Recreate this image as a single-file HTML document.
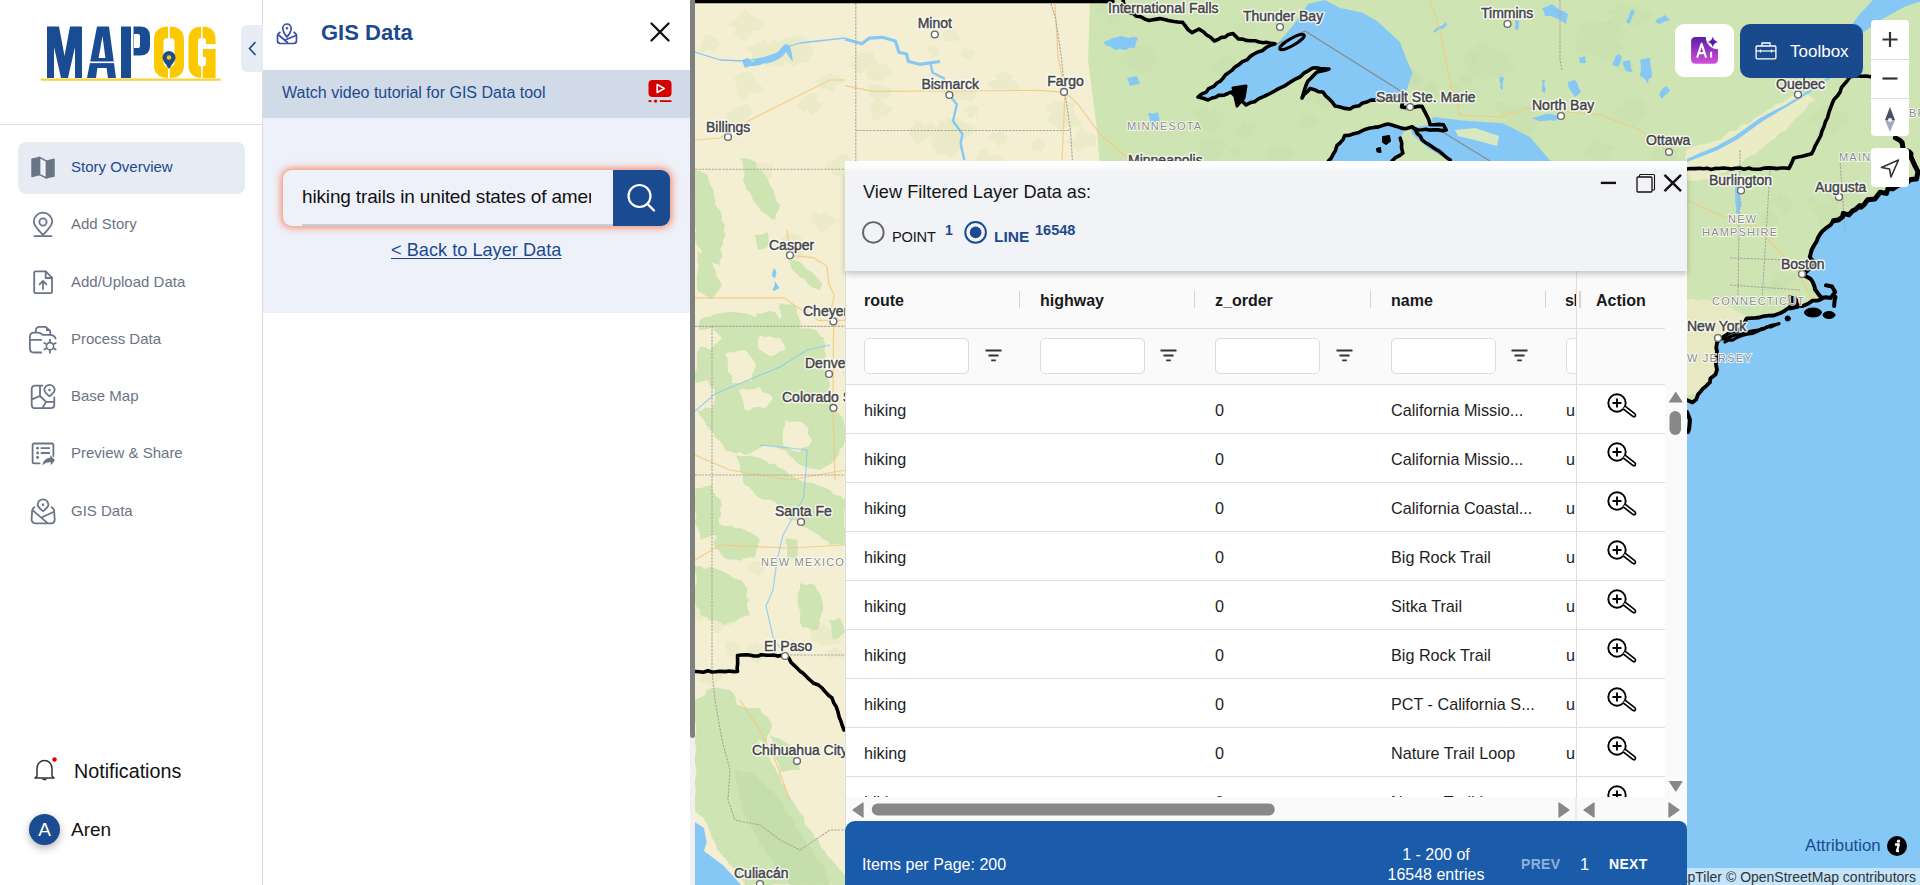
<!DOCTYPE html>
<html><head><meta charset="utf-8">
<style>
*{box-sizing:border-box;margin:0;padding:0}
html,body{width:1920px;height:885px;overflow:hidden;font-family:"Liberation Sans",sans-serif;background:#fff}
.abs{position:absolute}
#sidebar{position:absolute;left:0;top:0;width:263px;height:885px;background:#fff;border-right:1px solid #dcdcdc}
#sidebar .divider{position:absolute;left:0;top:124px;width:262px;height:1px;background:#e0e0e0}
.menu{position:absolute;left:18px;width:227px;height:52px;border-radius:8px}
.menu.active{background:#e6ebf4}
.menu .ic{position:absolute;left:10px;top:13px;width:28px;height:28px}
.menu .tx{position:absolute;left:53px;top:16px;font-size:15px;color:#6b7485;white-space:nowrap}
.menu.active .tx{color:#1c4a8f}
#panel{position:absolute;left:263px;top:0;width:427px;height:885px;background:#fff}
#map{position:absolute;left:695px;top:0;width:1225px;height:885px;background:#f1eecb;overflow:hidden}
#dlg{position:absolute;left:845px;top:161px;width:842px;height:724px}
#dlg .hd{position:absolute;top:131px;font-size:16px;font-weight:bold;color:#1a1a1a}
#dlg .sep{position:absolute;top:130px;width:1.5px;height:17px;background:#d4d4d4}
#dlg .inp{position:absolute;top:177px;width:105px;height:36px;background:#fff;border:1px solid #dcdcdc;border-radius:5px}
#dlg .flt{position:absolute;top:188px}
#dlg .row{position:absolute;left:0;width:819px;height:49px;border-bottom:1px solid #dedede;font-size:16.2px;color:#1e1e1e}
#dlg .row span{position:absolute;top:16px;white-space:nowrap}
#dlg .row .c1{left:18px}#dlg .row .c3{left:369px}#dlg .row .c4{left:545px}#dlg .row .c5{left:720px}
#dlg .zi{position:absolute;left:760px}
</style></head><body>
<div id="sidebar">
  <svg class="abs" style="left:0;top:0" width="262" height="100" viewBox="0 0 262 100">
    <g fill="#1a4c93">
      <polygon points="47,78 47,26.5 59,26.5 64.5,56 70,26.5 82,26.5 82,78 75,78 75,47 68,78 61,78 54,47 54,78"/>
      <path fill-rule="evenodd" d="M87,78 L97,26.5 L109,26.5 L116,78 L108,78 L106.6,68 L97.4,68 L96,78 Z M98.6,58 L102.5,36 L105.4,58 Z"/>
      <path fill-rule="evenodd" d="M121,78 L121,26.5 L140,26.5 Q150,26.5 150,36 L150,46 Q150,55.5 140,55.5 L131,55.5 L131,78 Z M134,34 L134,48 L138,48 Q140,48 140,46 L140,36 Q140,34 138,34 Z"/>
    </g>
    <rect x="88" y="61.5" width="26" height="1.6" fill="#fff"/>
    <rect x="131" y="26" width="2.5" height="30" fill="#fff"/>
    <g fill="#fcc800">
      <path fill-rule="evenodd" d="M154,40 Q154,26.5 169,26.5 Q184,26.5 184,40 L184,65 Q184,78 169,78 Q154,78 154,65 Z M163.5,41 Q163.5,38 169,38 Q174.5,38 174.5,41 L174.5,63 Q174.5,66.5 169,66.5 Q163.5,66.5 163.5,63 Z"/>
      <path d="M188.5,40 Q188.5,26.5 202,26.5 Q215.6,26.5 215.6,40 L215.6,44 L206,44 L206,40 Q206,38 202,38 Q198,38 198,40 L198,64 Q198,66.5 202,66.5 Q206,66.5 206,64 L206,57 L203,57 L203,49 L215.6,49 L215.6,78 L203,78 Q188.5,78 188.5,65 Z"/>
    </g>
    <rect x="168" y="26" width="1.8" height="13" fill="#fff"/>
    <rect x="168" y="66" width="1.8" height="13" fill="#fff"/>
    <rect x="201" y="26" width="1.6" height="12" fill="#fff"/>
    <rect x="201" y="66" width="1.6" height="12" fill="#fff"/>
    <path d="M169,69 C166,64 162.5,60.5 162.5,57.5 A6.5,6.5 0 0 1 175.5,57.5 C175.5,60.5 172,64 169,69 Z" fill="#1a4c93"/>
    <circle cx="169" cy="57.5" r="2.3" fill="#fcc800"/>
    <rect x="40.5" y="78.6" width="180.5" height="2.2" rx="1" fill="#fcd23a"/>
  </svg>
  <div class="abs" style="left:241px;top:25px;width:22px;height:47px;background:#e8edf5;border-radius:6px 0 0 6px"></div>
  <svg class="abs" style="left:241px;top:25px" width="22" height="47"><polyline points="14.5,17 8.5,23.5 14.5,30" fill="none" stroke="#1c4a8f" stroke-width="1.6"/></svg>
  <div class="divider"></div>
<svg class="abs" style="left:0;top:0;z-index:2" width="262" height="540" viewBox="0 0 262 540">
  <g fill="#6b7487" stroke="#6b7487" stroke-width="1.2" stroke-linejoin="round">
   <path d="M31.9,159.1 L39.6,157.3 L39.6,174.7 L31.9,176.7 Z"/>
   <path d="M46.4,161.1 L54.1,159.1 L54.1,176.2 L46.4,178 Z"/>
   <path d="M39.6,157.3 L46.4,161.1 L46.4,178 L39.6,174.7 Z" fill="#eef2f8" stroke-width="1.5"/>
  </g>
  <g fill="none" stroke="#6b7487" stroke-width="1.8" stroke-linecap="round" stroke-linejoin="round">
   <path d="M43,235 C39,230.5 33.8,226 33.8,221.8 A9.2,9.2 0 0 1 52.2,221.8 C52.2,226 47,230.5 43,235 Z"/>
   <circle cx="43" cy="222" r="3.6"/>
   <path d="M34.5,236.2 L51.5,236.2"/>

   <path d="M45.7,271.3 L35.5,271.3 Q34.2,271.3 34.2,272.6 L34.2,292 Q34.2,293.2 35.5,293.2 L50.8,293.2 Q52,293.2 52,292 L52,277.6 Z"/>
   <path d="M45.7,271.3 L45.7,278 L52,278"/>
   <path d="M43,289.1 L43,281.3 M39.6,284.4 L43,280.9 L46.4,284.4"/>

   <path d="M41.2,352.5 L34,352.5 Q29.9,352.5 29.9,348.5 L29.9,337 Q29.9,332.7 34.3,332.7 L38,332.7 Q40,332.7 43,334.9 L51.1,334.9 Q54.5,335.5 55.6,338.5"/>
   <path d="M35.8,332.5 L35.8,330.5 Q36,326.8 39.5,326.8 L45.7,326.8 L50.2,331 L50.2,334.5"/>
   <path d="M30.8,339.9 L41.2,339.9"/>
   <circle cx="50" cy="346.2" r="3.6" stroke-width="1.6"/>
   <path d="M50,339.6 L50,342.2 M50,350.2 L50,352.8 M44.3,342.9 L46.5,344.2 M53.5,348.2 L55.7,349.5 M44.3,349.5 L46.5,348.2 M53.5,344.2 L55.7,342.9" stroke-width="1.8"/>

   <path d="M42.5,385.6 L35.3,385.6 Q31.7,385.6 31.7,389.2 L31.7,404.4 Q31.7,408.2 35.5,408.2 L50.5,408.2 Q54.3,408.2 54.3,404.5 L54.3,397.5"/>
   <path d="M40,386 L40,396 M32.6,399.1 L40,396 L46.1,401.9 L53.8,401.9 M46.1,401.9 L42.5,407.7"/>
   <path d="M49.5,396.4 C47,394 44.3,392 44.3,390 A5.2,5.2 0 0 1 54.7,390 C54.7,392 52,394 49.5,396.4 Z"/>

   <path d="M39.6,463.4 L34.2,463.4 Q32.6,463.4 32.6,461.8 L32.6,445.1 Q32.6,443.5 34.2,443.5 L51.8,443.5 Q53.4,443.5 53.4,445.1 L53.4,456.1"/>
   <path d="M41.5,448.2 L49.3,448.2 M41.5,453 L49.3,453"/>

   <path d="M34.4,507.2 Q32.3,508.5 32.1,511 L31.6,519 Q31.6,523.3 35.5,523.3 L50.8,523.3 Q54.7,523.3 54.7,519.5 L54.1,511 Q54,508.5 51.6,507.2"/>
   <path d="M32.8,510.4 L47,522.6 M52.9,512.2 L42.1,517.2"/>
   <path d="M43,511.1 C40.6,509 37.6,507.2 37.6,504.8 A5.4,5.4 0 0 1 48.4,504.8 C48.4,507.2 45.4,509 43,511.1 Z"/>
  </g>
  <g fill="#6b7487">
   <circle cx="37.6" cy="448.2" r="1.4"/><circle cx="37.6" cy="453" r="1.4"/><circle cx="37.6" cy="457.5" r="1.4"/>
   <path d="M42.2,465.3 Q43.5,458.5 50.5,457.5 L50.2,455 L55,460.3 L50.8,465.3 L50.6,462 Q46,462 42.2,465.3 Z"/>
   <circle cx="49.5" cy="390.1" r="1.3"/><circle cx="43" cy="504.8" r="1.3"/>
   <path d="M46,327.5 L49.5,331 L46,331 Z"/>
  </g>
</svg>

  <div class="menu active" style="top:142px">
    <div class="tx">Story Overview</div>
  </div>
  <div class="menu" style="top:199px">
    <div class="tx">Add Story</div>
  </div>
  <div class="menu" style="top:257px">
    <div class="tx">Add/Upload Data</div>
  </div>
  <div class="menu" style="top:314px">
    <div class="tx">Process Data</div>
  </div>
  <div class="menu" style="top:371px">
    <div class="tx">Base Map</div>
  </div>
  <div class="menu" style="top:428px">
    <div class="tx">Preview &amp; Share</div>
  </div>
  <div class="menu" style="top:486px">
    <div class="tx">GIS Data</div>
  </div>

  <svg class="abs" style="left:33px;top:756px" width="24" height="26" viewBox="0 0 24 26"><path d="M4,20 L4,12 A7.5,7.5 0 0 1 19,12 L19,20 L21,22 L2,22 Z" fill="none" stroke="#333" stroke-width="1.5" stroke-linejoin="round"/><path d="M9.5,22.5 A2.2,2.2 0 0 0 13.5,22.5" fill="none" stroke="#333" stroke-width="1.5"/><circle cx="21.5" cy="3.5" r="2.2" fill="#e00000"/></svg>
  <div class="abs" style="left:74px;top:759.5px;font-size:19.7px;color:#111">Notifications</div>
  <div class="abs" style="left:29px;top:814px;width:31px;height:31px;border-radius:50%;background:#1b4c91;box-shadow:0 3px 8px rgba(0,0,0,.3);color:#fff;font-size:19px;text-align:center;line-height:31px">A</div>
  <div class="abs" style="left:71px;top:819px;font-size:19px;color:#111">Aren</div>
</div>
<div id="panel">
  <svg class="abs" style="left:13px;top:22px" width="22" height="23" viewBox="0 0 22 23"><path d="M4.5,10 Q1.5,11.5 1.5,14 L1.5,18.5 Q1.5,21.5 4.5,21.5 L17.5,21.5 Q20.5,21.5 20.5,18.5 L20.5,14 Q20.5,11.5 17.5,10" fill="none" stroke="#3e4fa6" stroke-width="1.7"/><path d="M2,12.5 L12,21 M20,13.5 L9,18" fill="none" stroke="#3e4fa6" stroke-width="1.7"/><path d="M11,15 C8.5,12 6.8,10 6.8,6.2 A4.2,4.2 0 0 1 15.2,6.2 C15.2,10 13.5,12 11,15 Z" fill="#fff" stroke="#3e4fa6" stroke-width="1.7"/><circle cx="11" cy="6.2" r="1.2" fill="#3e4fa6"/></svg>
  <div class="abs" style="left:58px;top:20px;font-size:22px;font-weight:bold;color:#1c4a8f">GIS Data</div>
  <svg class="abs" style="left:386px;top:21px" width="22" height="22" viewBox="0 0 22 22"><path d="M2.5,2.5 L19.5,19.5 M19.5,2.5 L2.5,19.5" stroke="#111" stroke-width="2.3" stroke-linecap="round"/></svg>
  <div class="abs" style="left:0;top:70px;width:427px;height:48px;background:#d1dbe8"></div>
  <div class="abs" style="left:19px;top:84px;font-size:16px;color:#1c4a8f">Watch video tutorial for GIS Data tool</div>
  <svg class="abs" style="left:385px;top:80px" width="24" height="24" viewBox="0 0 24 24"><rect x="0.5" y="0" width="23" height="17" rx="4" fill="#d40000"/><path d="M9.2,4.5 L16.2,8.5 L9.2,12.5 Z" fill="none" stroke="#fff" stroke-width="1.6" stroke-linejoin="round"/><rect x="0.5" y="20.2" width="3" height="1.8" fill="#d40000"/><circle cx="7.6" cy="21.1" r="1.6" fill="#d40000"/><rect x="11.8" y="20.2" width="11.7" height="1.8" fill="#d40000"/></svg>
  <div class="abs" style="left:0;top:118px;width:427px;height:195px;background:#eef1fa"></div>
  <div class="abs" style="left:20px;top:170px;width:387px;height:56px;border-radius:9px;background:#eef1fa;box-shadow:0 0 7px 2px rgba(250,105,60,.72);overflow:hidden">
    <div class="abs" style="left:19px;top:16px;width:289px;overflow:hidden;white-space:nowrap;font-size:19px;color:#111;letter-spacing:-0.15px">hiking trails in united states of america</div>
    <div class="abs" style="left:19px;bottom:0;width:311px;height:2px;background:#c9ccd6"></div>
    <div class="abs" style="left:330px;top:0;width:57px;height:56px;background:#1a4b91"></div>
    <svg class="abs" style="left:330px;top:0" width="57" height="56" viewBox="0 0 57 56"><circle cx="26.5" cy="26" r="11" fill="none" stroke="#fff" stroke-width="2.2"/><line x1="34.5" y1="34" x2="41" y2="40.5" stroke="#fff" stroke-width="2.4" stroke-linecap="round"/></svg>
  </div>
  <div class="abs" style="left:128px;top:240px;font-size:18.2px;color:#1c4a8f;text-decoration:underline;text-underline-offset:2px">&lt; Back to Layer Data</div>
  <div class="abs" style="left:427px;top:0;width:5px;height:738px;background:#808080;border-radius:0 0 3px 3px"></div>
  <div class="abs" style="left:427px;top:738px;width:5px;height:147px;background:#f0f0f0"></div>
</div>
<div id="map">
<svg id="mapsvg" class="abs" style="left:0;top:0" width="1225" height="885" viewBox="695 0 1225 885">
<rect x="695" y="0" width="1225" height="885" fill="#f4efd2"/>
<path d="M1090.0,0.0 L1920.0,0.0 L1920.0,885.0 L1687.0,885.0 L1687.0,420.0 L1500.0,420.0 L1300.0,170.0 L1100.0,170.0 L1097.0,130.0 L1088.0,60.0 Z" fill="#cfe4b3"/>
<path d="M1687.0,150.0 L1692.9,146.6 L1700.8,144.3 L1706.9,143.5 L1711.6,142.0 L1720.0,140.0 L1723.9,136.2 L1729.7,131.2 L1736.8,130.6 L1741.4,124.6 L1749.1,123.9 L1754.6,118.2 L1760.0,115.0 L1767.6,109.9 L1772.9,107.6 L1775.7,103.6 L1782.1,103.1 L1787.3,98.9 L1794.8,94.8 L1800.0,92.0 L1807.7,94.3 L1815.0,100.0 L1808.2,103.8 L1805.7,109.7 L1799.3,115.3 L1794.8,119.2 L1790.0,125.0 L1786.2,130.0 L1779.0,133.6 L1775.1,139.0 L1770.9,140.8 L1766.9,144.3 L1760.0,150.0 L1754.7,154.4 L1748.6,156.6 L1743.2,160.7 L1741.1,163.6 L1736.5,165.9 L1730.0,170.0 L1724.8,172.4 L1718.3,173.8 L1713.4,177.8 L1705.9,178.7 L1700.0,180.0 L1691.7,180.8 L1687.0,180.0 L1687.6,176.0 L1688.3,167.1 L1686.5,162.7 L1685.1,155.8 Z" fill="#e9ecc4"/>
<path d="M1687.0,300.0 L1692.3,298.5 L1698.4,301.1 L1705.3,299.0 L1713.0,301.5 L1720.0,300.0 L1724.3,303.4 L1732.2,308.7 L1739.3,312.3 L1743.1,314.1 L1750.0,318.0 L1743.8,323.9 L1740.6,325.4 L1731.9,330.1 L1726.5,335.5 L1722.0,340.0 L1721.0,345.1 L1717.2,351.7 L1717.3,358.3 L1718.2,364.8 L1715.0,370.0 L1711.3,375.5 L1708.2,378.2 L1705.3,386.1 L1700.0,390.0 L1695.0,393.7 L1687.0,395.0 L1686.6,388.3 L1685.4,382.9 L1685.2,374.3 L1685.8,368.3 L1686.4,361.5 L1685.0,355.6 L1685.4,350.1 L1685.1,345.8 L1687.5,336.6 L1686.0,331.1 L1686.5,323.8 L1688.4,321.0 L1686.9,312.6 L1685.3,304.7 Z" fill="#e6e9c2"/>
<path d="M976.7,91.8 L976.7,95.6 L971.5,102.5 L966.1,99.4 L959.0,99.4 L949.6,103.0 L953.6,99.4 L940.0,91.8 L946.5,88.1 L956.3,81.9 L959.7,83.1 L964.4,84.8 L971.1,82.7 L979.9,86.3 Z" fill="#e9e9c6" opacity="0.75"/>
<path d="M1016.1,82.5 L1020.4,88.7 L1014.3,91.8 L1006.4,89.9 L1001.8,88.5 L994.4,89.6 L989.3,86.4 L986.4,82.5 L997.8,79.2 L993.4,74.8 L1000.1,73.6 L1005.8,71.5 L1013.8,76.2 L1011.2,78.8 Z" fill="#e9e9c6" opacity="0.75"/>
<path d="M1082.1,122.5 L1080.6,125.4 L1079.9,126.9 L1078.3,126.3 L1075.1,126.0 L1072.2,125.2 L1071.3,124.2 L1071.6,122.5 L1069.3,120.6 L1071.3,119.4 L1075.6,115.7 L1078.6,119.1 L1082.9,119.4 L1081.6,119.6 Z" fill="#e9e9c6" opacity="0.75"/>
<path d="M938.0,50.9 L938.3,53.3 L937.4,54.6 L936.0,55.7 L932.5,57.3 L931.2,53.6 L926.4,53.7 L929.2,50.9 L927.2,47.9 L931.2,45.5 L932.2,45.7 L935.3,47.8 L936.3,45.5 L938.3,48.4 Z" fill="#e9e9c6" opacity="0.75"/>
<path d="M927.5,132.7 L930.6,135.2 L923.4,140.5 L921.3,142.9 L915.7,145.3 L912.4,136.9 L909.3,136.6 L910.6,132.7 L908.4,128.3 L912.9,126.2 L914.3,119.5 L920.8,121.9 L925.8,127.6 L924.1,130.3 Z" fill="#e9e9c6" opacity="0.75"/>
<path d="M1073.9,113.7 L1078.8,120.3 L1073.1,127.9 L1067.0,126.5 L1060.5,130.4 L1052.9,125.3 L1046.9,121.2 L1051.1,113.7 L1045.5,106.4 L1055.7,101.2 L1060.1,100.5 L1068.7,102.6 L1075.4,102.8 L1073.7,107.5 Z" fill="#e9e9c6" opacity="0.75"/>
<path d="M1095.4,141.4 L1096.3,145.7 L1094.3,146.6 L1087.1,147.4 L1080.3,151.5 L1077.2,151.1 L1071.6,146.4 L1065.3,141.4 L1076.7,137.6 L1073.9,135.3 L1081.4,127.3 L1086.9,131.6 L1094.6,134.3 L1097.2,138.0 Z" fill="#e9e9c6" opacity="0.75"/>
<path d="M977.4,129.9 L971.7,134.4 L963.4,139.5 L961.4,145.5 L952.9,146.6 L949.3,136.7 L943.8,134.2 L945.6,129.9 L941.7,124.7 L949.0,117.5 L952.1,118.5 L959.1,123.0 L969.6,124.3 L973.3,124.3 Z" fill="#e9e9c6" opacity="0.75"/>
<path d="M933.3,127.7 L932.4,130.2 L932.2,130.1 L930.3,132.6 L928.3,132.6 L925.6,132.1 L922.4,129.9 L925.4,127.7 L925.9,126.6 L926.1,123.5 L928.6,124.2 L930.6,122.5 L933.1,123.8 L935.7,125.9 Z" fill="#e9e9c6" opacity="0.75"/>
<path d="M1047.0,145.5 L1042.0,147.6 L1042.6,150.9 L1039.4,150.7 L1036.3,151.7 L1032.7,149.3 L1031.7,147.1 L1030.6,145.5 L1031.8,142.8 L1035.2,140.1 L1036.2,138.4 L1039.6,139.2 L1041.5,140.1 L1045.7,143.6 Z" fill="#e9e9c6" opacity="0.75"/>
<path d="M892.7,73.3 L884.6,78.4 L883.0,82.3 L880.4,80.9 L875.5,79.4 L873.8,80.5 L866.4,78.5 L865.4,73.3 L868.5,67.8 L874.2,68.0 L876.0,66.1 L881.7,63.4 L885.8,64.1 L889.4,70.1 Z" fill="#e9e9c6" opacity="0.75"/>
<path d="M957.0,136.0 L965.1,141.4 L955.8,143.0 L949.2,147.8 L942.1,142.9 L932.4,145.6 L933.4,142.7 L929.8,136.0 L929.8,132.8 L936.0,127.3 L941.0,119.8 L948.4,124.5 L952.1,127.1 L963.2,128.9 Z" fill="#e9e9c6" opacity="0.75"/>
<path d="M975.5,54.2 L971.7,57.4 L969.9,57.6 L968.5,61.0 L965.8,59.2 L962.1,57.2 L959.1,55.9 L959.7,54.2 L962.3,51.5 L962.8,50.0 L965.7,48.2 L968.4,49.9 L972.4,48.9 L974.1,50.8 Z" fill="#e9e9c6" opacity="0.75"/>
<path d="M1007.2,137.8 L1007.3,140.1 L1001.8,144.6 L999.0,146.7 L995.3,142.0 L993.8,143.7 L992.0,139.6 L987.4,137.8 L988.7,136.0 L993.1,132.0 L996.6,133.3 L999.7,129.4 L1004.6,134.5 L1004.8,134.4 Z" fill="#e9e9c6" opacity="0.75"/>
<path d="M977.7,111.3 L977.1,114.0 L977.8,116.2 L974.3,115.5 L971.9,118.8 L966.5,117.7 L968.8,112.9 L962.7,111.3 L964.8,109.1 L968.6,106.6 L971.6,105.0 L974.1,104.4 L979.2,107.9 L979.6,108.1 Z" fill="#e9e9c6" opacity="0.75"/>
<path d="M958.5,35.2 L959.9,38.4 L956.5,41.2 L953.0,40.4 L949.5,40.9 L944.8,41.0 L946.1,38.6 L942.4,35.2 L942.9,33.0 L945.1,29.2 L949.3,28.3 L953.2,30.1 L956.6,32.5 L956.8,32.8 Z" fill="#e9e9c6" opacity="0.75"/>
<path d="M876.0,60.1 L877.8,65.0 L868.9,68.9 L865.3,70.0 L859.9,74.0 L853.7,69.2 L848.7,66.2 L855.3,60.1 L849.0,56.8 L855.4,55.5 L860.4,51.6 L864.1,52.7 L872.8,52.1 L873.5,54.1 Z" fill="#e9e9c6" opacity="0.75"/>
<path d="M1003.5,159.2 L999.8,164.5 L992.4,169.9 L989.7,168.6 L985.9,168.8 L979.4,163.9 L972.3,163.2 L975.2,159.2 L978.0,155.8 L979.1,151.1 L985.6,147.8 L990.0,153.8 L993.7,154.7 L995.5,154.0 Z" fill="#e9e9c6" opacity="0.75"/>
<path d="M955.8,144.1 L964.7,147.0 L959.2,152.0 L950.7,159.1 L945.4,154.9 L936.1,154.2 L935.9,150.8 L930.5,144.1 L939.7,138.9 L939.7,137.9 L945.9,133.3 L949.7,134.1 L957.4,136.0 L957.3,139.1 Z" fill="#e9e9c6" opacity="0.75"/>
<path d="M970.5,125.6 L966.5,128.6 L959.0,135.0 L957.5,135.2 L952.2,132.5 L946.3,132.9 L943.5,129.9 L940.8,125.6 L946.6,120.1 L944.9,116.3 L952.9,120.3 L956.4,117.5 L962.1,121.1 L964.8,123.2 Z" fill="#e9e9c6" opacity="0.75"/>
<path d="M892.1,109.8 L889.5,112.7 L885.5,118.5 L882.7,115.3 L877.8,121.1 L871.6,118.6 L871.8,113.5 L870.5,109.8 L870.4,105.3 L869.3,103.8 L876.8,99.0 L882.9,101.5 L885.7,105.3 L893.1,107.4 Z" fill="#e9e9c6" opacity="0.75"/>
<path d="M891.1,92.5 L890.6,94.8 L883.6,100.1 L880.2,99.3 L875.8,102.2 L873.3,97.0 L870.3,96.9 L869.3,92.5 L867.3,88.5 L869.6,83.2 L875.4,84.6 L881.7,85.6 L884.2,86.4 L892.0,87.5 Z" fill="#e9e9c6" opacity="0.75"/>
<path d="M744.2,118.9 L743.6,121.3 L742.2,126.3 L738.2,128.4 L733.8,124.1 L728.8,126.8 L729.2,120.8 L726.5,118.9 L727.1,114.3 L729.4,111.5 L734.7,111.3 L738.6,114.3 L739.7,111.9 L747.4,116.9 Z" fill="#e9e9c6" opacity="0.75"/>
<path d="M807.2,50.3 L801.1,56.1 L800.5,60.7 L794.7,59.3 L787.7,62.4 L783.6,59.0 L777.4,55.9 L773.5,50.3 L776.3,45.0 L780.9,39.6 L788.1,36.2 L796.2,38.5 L800.5,40.3 L807.3,46.0 Z" fill="#e9e9c6" opacity="0.75"/>
<path d="M780.2,51.0 L769.5,54.5 L768.8,57.9 L765.2,57.4 L758.5,57.9 L751.5,61.5 L752.3,53.9 L748.1,51.0 L744.5,48.3 L755.5,45.0 L758.7,43.1 L764.5,39.7 L767.3,45.0 L770.7,47.8 Z" fill="#e9e9c6" opacity="0.75"/>
<path d="M824.4,103.2 L817.9,108.5 L819.5,109.3 L812.5,115.6 L807.4,109.8 L805.6,113.1 L796.9,106.7 L798.2,103.2 L801.7,97.6 L801.8,97.8 L808.4,94.6 L812.1,92.0 L818.2,95.4 L816.9,100.5 Z" fill="#e9e9c6" opacity="0.75"/>
<path d="M761.7,86.7 L765.8,90.8 L756.2,93.1 L750.7,93.1 L742.4,101.8 L734.8,92.5 L736.1,92.8 L737.2,86.7 L733.7,79.5 L736.7,74.5 L743.9,72.2 L749.7,70.9 L752.5,74.8 L756.5,81.4 Z" fill="#e9e9c6" opacity="0.75"/>
<path d="M788.2,54.6 L784.3,58.8 L784.9,65.3 L779.0,67.7 L774.1,64.8 L767.6,67.4 L759.5,60.3 L768.1,54.6 L760.8,50.8 L766.7,46.0 L774.4,38.5 L780.3,46.3 L786.1,47.3 L787.8,49.5 Z" fill="#e9e9c6" opacity="0.75"/>
<path d="M754.3,111.3 L749.6,115.3 L748.3,119.7 L745.5,120.3 L741.4,121.0 L739.4,115.4 L737.7,115.2 L731.8,111.3 L735.3,106.9 L736.7,107.4 L741.6,106.1 L744.7,104.4 L747.0,103.0 L751.4,107.9 Z" fill="#e9e9c6" opacity="0.75"/>
<path d="M806.7,246.6 L805.7,249.4 L802.0,257.1 L798.4,260.6 L790.2,258.8 L788.8,254.1 L782.8,252.2 L784.6,246.6 L780.9,240.3 L782.4,236.8 L791.6,232.8 L798.2,235.0 L801.6,237.6 L802.6,240.7 Z" fill="#e9e9c6" opacity="0.75"/>
<path d="M860.1,167.6 L859.6,172.6 L849.1,172.7 L845.3,178.5 L839.7,176.2 L831.8,174.7 L831.6,170.6 L824.4,167.6 L827.0,162.8 L834.5,158.9 L840.8,153.6 L847.3,154.4 L852.0,162.1 L858.3,163.9 Z" fill="#e9e9c6" opacity="0.75"/>
<path d="M845.1,80.9 L841.0,83.4 L834.3,86.1 L833.8,93.4 L827.1,88.4 L821.7,89.7 L820.7,85.2 L815.3,80.9 L822.4,77.0 L825.1,74.4 L827.3,74.5 L832.7,73.7 L837.7,74.7 L841.8,78.5 Z" fill="#e9e9c6" opacity="0.75"/>
<path d="M814.5,50.6 L810.4,56.7 L808.8,62.7 L801.6,62.7 L792.2,66.6 L784.4,59.7 L783.9,56.4 L775.9,50.6 L782.8,45.5 L783.9,42.3 L795.2,35.8 L802.0,35.8 L808.0,38.5 L809.0,44.7 Z" fill="#e9e9c6" opacity="0.75"/>
<path d="M720.4,44.2 L715.7,48.4 L716.6,49.1 L712.0,51.4 L708.4,49.1 L701.4,53.2 L699.5,48.9 L700.6,44.2 L703.2,39.9 L703.4,35.5 L708.7,34.2 L711.6,36.0 L719.1,40.6 L717.2,41.3 Z" fill="#e9e9c6" opacity="0.75"/>
<path d="M766.4,24.7 L758.9,30.4 L752.7,30.2 L751.6,34.5 L743.7,41.0 L733.7,33.9 L737.1,29.0 L726.4,24.7 L737.2,17.9 L738.9,15.5 L744.7,9.0 L751.9,16.1 L757.6,17.9 L765.3,21.6 Z" fill="#e9e9c6" opacity="0.75"/>
<path d="M727.3,233.6 L724.8,235.7 L721.8,241.2 L717.2,237.9 L713.9,239.3 L708.9,237.6 L709.7,236.0 L705.3,233.6 L708.4,230.1 L708.0,227.7 L713.9,228.0 L718.1,225.8 L719.8,227.4 L720.4,229.3 Z" fill="#e9e9c6" opacity="0.75"/>
<path d="M770.5,171.4 L772.0,174.4 L772.7,175.8 L765.9,182.1 L761.9,178.4 L756.6,176.4 L750.3,177.0 L757.3,171.4 L751.6,167.9 L754.3,164.5 L762.1,162.3 L766.6,163.8 L771.8,162.7 L774.0,167.5 Z" fill="#e9e9c6" opacity="0.75"/>
<path d="M838.0,220.5 L835.0,223.2 L830.1,225.8 L824.9,231.2 L819.5,231.4 L817.3,227.4 L815.1,224.6 L811.6,220.5 L811.8,216.0 L815.3,211.4 L820.8,214.6 L824.0,212.0 L829.1,214.0 L830.4,215.7 Z" fill="#e9e9c6" opacity="0.75"/>
<path d="M722.5,677.9 L718.5,680.7 L716.5,682.2 L712.7,687.9 L707.9,685.1 L702.8,682.5 L697.2,680.8 L701.5,677.9 L698.4,672.8 L701.5,673.5 L708.2,670.0 L712.4,665.2 L714.8,670.8 L723.3,672.2 Z" fill="#e9e9c6" opacity="0.75"/>
<path d="M728.9,619.2 L737.3,622.4 L728.5,626.1 L723.8,625.7 L719.2,634.3 L710.6,629.4 L711.8,622.8 L706.9,619.2 L709.3,612.7 L713.6,612.0 L716.7,607.7 L722.7,609.6 L730.5,614.1 L731.4,613.7 Z" fill="#e9e9c6" opacity="0.75"/>
<path d="M839.8,636.8 L842.9,641.4 L837.0,643.8 L828.2,645.2 L821.9,645.0 L818.5,643.8 L812.2,641.1 L811.1,636.8 L809.7,629.9 L818.5,628.4 L823.3,623.1 L828.3,627.4 L830.7,630.1 L836.0,632.1 Z" fill="#e9e9c6" opacity="0.75"/>
<path d="M841.2,653.0 L844.3,655.5 L840.3,659.2 L836.4,656.7 L832.4,658.8 L830.7,659.9 L827.6,656.5 L825.5,653.0 L827.1,650.8 L830.9,649.4 L831.9,649.2 L835.5,646.9 L839.3,649.5 L842.8,650.7 Z" fill="#e9e9c6" opacity="0.75"/>
<path d="M810.4,646.6 L812.7,648.8 L809.1,652.4 L806.4,651.0 L803.9,650.7 L802.6,649.1 L798.2,649.2 L796.3,646.6 L800.0,643.8 L799.2,643.3 L803.4,640.3 L807.4,639.4 L808.5,641.7 L809.2,644.3 Z" fill="#e9e9c6" opacity="0.75"/>
<path d="M765.0,567.8 L763.8,570.1 L762.3,573.6 L758.4,576.3 L755.3,572.6 L751.8,573.4 L751.0,571.4 L745.7,567.8 L746.8,565.9 L751.5,562.6 L755.6,561.0 L758.2,560.4 L763.3,562.0 L764.2,565.2 Z" fill="#e9e9c6" opacity="0.75"/>
<path d="M719.3,605.1 L719.0,608.9 L712.5,615.5 L708.1,615.4 L699.8,621.5 L691.8,615.6 L688.4,609.9 L689.5,605.1 L685.9,598.1 L695.0,592.3 L701.4,597.2 L706.8,595.4 L711.6,591.7 L712.7,601.3 Z" fill="#e9e9c6" opacity="0.75"/>
<path d="M737.5,648.4 L739.6,650.5 L738.1,654.0 L735.0,655.3 L731.3,656.4 L726.1,652.7 L727.0,652.1 L726.5,648.4 L724.7,645.2 L726.1,642.0 L731.9,641.6 L734.9,641.9 L737.5,644.4 L741.9,645.6 Z" fill="#e9e9c6" opacity="0.75"/>
<path d="M740.7,592.4 L739.7,594.3 L737.8,596.0 L736.7,597.0 L732.5,601.0 L728.9,596.3 L723.7,596.5 L729.0,592.4 L726.3,588.5 L729.3,585.8 L732.8,584.1 L736.0,586.5 L741.2,585.1 L744.7,589.1 Z" fill="#e9e9c6" opacity="0.75"/>
<path d="M776.7,651.9 L768.3,655.6 L769.7,657.7 L762.9,657.3 L758.1,665.1 L750.3,657.0 L748.2,655.8 L747.4,651.9 L745.8,645.9 L756.5,642.9 L759.2,646.3 L763.2,640.5 L771.9,646.9 L770.3,649.5 Z" fill="#e9e9c6" opacity="0.75"/>
<path d="M1422.5,79.9 L1425.7,82.5 L1420.0,86.4 L1417.3,90.4 L1412.8,88.5 L1408.6,87.3 L1408.9,82.2 L1408.5,79.9 L1408.1,76.6 L1410.8,74.9 L1413.5,72.1 L1416.1,71.7 L1419.4,75.4 L1423.1,77.0 Z" fill="#c5ddab" opacity="0.45"/>
<path d="M1258.8,12.9 L1254.0,14.5 L1254.3,18.4 L1251.6,19.2 L1249.2,17.3 L1245.7,16.4 L1247.2,15.2 L1243.6,12.9 L1246.2,10.0 L1245.5,7.5 L1249.3,6.8 L1252.2,9.6 L1252.8,10.3 L1254.2,11.6 Z" fill="#c5ddab" opacity="0.45"/>
<path d="M1317.0,121.8 L1314.0,126.1 L1311.3,127.4 L1310.7,130.4 L1305.8,128.0 L1301.3,128.9 L1298.4,126.2 L1302.5,121.8 L1301.0,118.2 L1303.9,114.3 L1307.1,114.5 L1309.7,115.7 L1313.0,115.6 L1318.2,119.1 Z" fill="#c5ddab" opacity="0.45"/>
<path d="M1481.5,59.9 L1474.9,62.4 L1476.4,63.8 L1472.3,66.7 L1467.9,64.6 L1466.6,63.5 L1463.5,62.6 L1465.3,59.9 L1463.1,57.4 L1464.6,52.5 L1468.7,51.1 L1471.6,51.8 L1473.5,52.3 L1477.2,55.8 Z" fill="#c5ddab" opacity="0.45"/>
<path d="M1236.7,68.3 L1241.0,74.6 L1234.2,74.1 L1229.9,82.9 L1225.4,79.6 L1220.1,77.5 L1218.7,73.3 L1209.9,68.3 L1214.3,63.7 L1218.8,62.9 L1223.6,56.4 L1230.2,56.6 L1234.9,61.0 L1236.3,63.3 Z" fill="#c5ddab" opacity="0.45"/>
<path d="M1438.6,84.9 L1437.8,87.0 L1437.2,87.3 L1433.4,91.3 L1430.7,88.6 L1427.9,90.0 L1427.5,87.5 L1428.4,84.9 L1427.1,83.3 L1427.5,80.8 L1430.4,79.1 L1433.8,80.3 L1437.4,82.7 L1439.1,82.5 Z" fill="#c5ddab" opacity="0.45"/>
<path d="M1256.0,130.1 L1252.2,133.0 L1252.7,134.1 L1247.8,140.2 L1243.1,136.3 L1237.3,138.6 L1233.9,133.8 L1231.4,130.1 L1239.0,127.0 L1241.3,126.3 L1243.4,119.5 L1248.4,124.8 L1250.0,124.3 L1257.6,126.2 Z" fill="#c5ddab" opacity="0.45"/>
<path d="M1634.9,16.1 L1642.4,22.8 L1630.4,27.7 L1626.4,23.3 L1620.0,26.6 L1611.9,24.2 L1607.2,22.7 L1611.5,16.1 L1606.1,10.7 L1616.3,9.5 L1618.1,2.4 L1626.2,7.0 L1637.5,4.4 L1640.6,11.3 Z" fill="#c5ddab" opacity="0.45"/>
<path d="M1287.7,68.3 L1288.0,70.5 L1284.1,72.7 L1282.1,73.0 L1278.1,72.4 L1275.3,71.8 L1271.6,70.2 L1270.8,68.3 L1273.9,64.9 L1276.0,63.0 L1278.3,63.1 L1280.9,63.2 L1283.5,64.1 L1288.8,66.3 Z" fill="#c5ddab" opacity="0.45"/>
<path d="M1510.5,109.2 L1512.8,111.3 L1507.7,113.5 L1505.3,117.4 L1501.1,115.7 L1499.8,116.0 L1498.5,111.6 L1495.9,109.2 L1494.7,106.8 L1496.3,102.1 L1502.0,102.2 L1504.8,103.7 L1507.9,105.0 L1511.4,106.1 Z" fill="#c5ddab" opacity="0.45"/>
<path d="M1677.5,156.4 L1679.3,162.9 L1677.3,162.5 L1666.3,167.8 L1658.8,165.8 L1648.4,163.8 L1650.0,160.2 L1648.2,156.4 L1653.7,152.4 L1651.5,145.2 L1658.5,146.5 L1667.4,141.2 L1675.4,149.7 L1677.0,153.2 Z" fill="#c5ddab" opacity="0.45"/>
<path d="M1607.3,151.4 L1612.6,156.8 L1604.8,163.3 L1601.4,163.2 L1596.4,163.9 L1592.3,157.4 L1584.9,155.7 L1579.8,151.4 L1586.1,148.2 L1591.6,142.4 L1595.1,140.1 L1603.0,143.8 L1610.9,144.9 L1617.9,146.1 Z" fill="#c5ddab" opacity="0.45"/>
<path d="M1356.5,99.9 L1343.2,103.4 L1347.5,111.0 L1339.6,107.9 L1332.4,106.6 L1329.7,107.5 L1317.0,105.7 L1316.5,99.9 L1323.5,96.7 L1328.5,93.9 L1331.2,90.2 L1339.0,86.8 L1348.1,87.0 L1349.8,94.8 Z" fill="#c5ddab" opacity="0.45"/>
<path d="M1634.7,66.1 L1631.1,68.9 L1629.5,70.9 L1626.0,72.6 L1623.1,74.9 L1621.0,71.7 L1616.1,68.9 L1617.7,66.1 L1617.3,63.6 L1618.9,62.0 L1621.9,59.5 L1625.3,60.0 L1631.9,63.1 L1632.7,61.9 Z" fill="#c5ddab" opacity="0.45"/>
<path d="M1319.8,97.7 L1321.2,100.4 L1317.9,103.7 L1314.6,102.1 L1310.7,103.4 L1307.4,105.1 L1304.2,102.0 L1303.5,97.7 L1302.3,95.6 L1303.7,90.1 L1310.3,91.6 L1314.8,88.5 L1318.7,94.1 L1322.5,95.8 Z" fill="#c5ddab" opacity="0.45"/>
<path d="M1479.6,90.6 L1481.6,97.1 L1472.6,96.0 L1466.5,101.7 L1458.3,107.8 L1449.2,96.6 L1445.0,95.6 L1443.5,90.6 L1449.1,85.5 L1456.0,82.5 L1458.2,83.1 L1464.6,75.0 L1473.4,80.5 L1471.4,87.0 Z" fill="#c5ddab" opacity="0.45"/>
<path d="M1295.6,152.8 L1289.4,157.0 L1289.1,157.6 L1283.2,161.6 L1278.3,161.2 L1273.5,161.1 L1265.6,156.8 L1266.5,152.8 L1267.0,150.3 L1271.2,147.8 L1277.1,146.3 L1282.0,146.6 L1286.0,145.1 L1290.3,149.3 Z" fill="#c5ddab" opacity="0.45"/>
<path d="M1443.0,135.6 L1445.0,138.3 L1439.9,140.0 L1434.7,144.3 L1430.9,141.2 L1429.5,143.0 L1425.6,139.4 L1424.4,135.6 L1424.3,131.0 L1425.2,130.0 L1431.0,130.1 L1435.6,130.9 L1437.9,128.0 L1438.0,131.8 Z" fill="#c5ddab" opacity="0.45"/>
<path d="M1435.7,90.5 L1439.5,94.5 L1433.1,97.5 L1431.0,95.6 L1427.4,98.2 L1425.8,97.4 L1420.8,94.7 L1417.1,90.5 L1422.4,86.1 L1422.8,85.9 L1426.8,82.1 L1431.1,85.0 L1432.7,84.7 L1435.8,87.9 Z" fill="#c5ddab" opacity="0.45"/>
<path d="M1255.1,25.4 L1254.4,29.1 L1255.5,30.0 L1249.8,36.3 L1244.1,34.0 L1238.7,32.2 L1235.7,30.5 L1233.4,25.4 L1240.9,20.3 L1240.8,17.0 L1244.9,17.4 L1248.8,15.4 L1255.9,18.7 L1256.8,22.2 Z" fill="#c5ddab" opacity="0.45"/>
<path d="M1243.8,152.2 L1238.3,155.3 L1237.3,156.6 L1235.6,159.6 L1233.5,159.1 L1232.2,157.0 L1231.0,153.6 L1227.7,152.2 L1227.8,149.2 L1229.5,148.0 L1233.8,147.0 L1235.7,147.0 L1238.2,148.1 L1239.0,149.5 Z" fill="#c5ddab" opacity="0.45"/>
<path d="M1348.2,80.3 L1350.0,82.6 L1344.7,83.5 L1343.2,86.1 L1340.1,87.3 L1336.6,85.7 L1334.6,83.3 L1338.4,80.3 L1335.9,77.8 L1337.7,76.0 L1340.1,77.2 L1343.4,73.4 L1344.3,77.8 L1349.5,77.3 Z" fill="#c5ddab" opacity="0.45"/>
<path d="M1130.7,10.0 L1127.8,16.1 L1125.4,14.9 L1115.9,24.1 L1109.4,24.5 L1105.7,17.6 L1102.8,12.8 L1096.1,10.0 L1100.0,4.9 L1106.3,-0.4 L1110.9,1.4 L1118.2,2.0 L1120.1,2.9 L1126.7,3.7 Z" fill="#c5ddab" opacity="0.45"/>
<path d="M1302.9,41.9 L1301.9,47.7 L1298.7,47.9 L1295.4,50.2 L1289.7,53.2 L1283.3,50.0 L1286.0,47.3 L1283.4,41.9 L1282.7,35.7 L1286.2,35.1 L1289.3,28.0 L1295.6,35.4 L1302.8,32.2 L1302.7,36.5 Z" fill="#c5ddab" opacity="0.45"/>
<path d="M1334.4,49.5 L1333.7,51.8 L1327.4,56.1 L1321.7,62.1 L1318.3,56.3 L1310.3,59.9 L1305.4,53.0 L1303.8,49.5 L1307.4,43.8 L1314.7,44.5 L1317.1,37.2 L1323.3,36.6 L1327.2,42.9 L1327.1,46.2 Z" fill="#c5ddab" opacity="0.45"/>
<path d="M1650.9,16.1 L1650.1,17.9 L1647.6,20.8 L1646.3,22.2 L1642.5,22.0 L1638.1,19.0 L1639.5,17.7 L1638.4,16.1 L1635.4,13.5 L1641.3,12.2 L1642.8,11.4 L1646.6,7.9 L1649.0,11.1 L1653.3,13.6 Z" fill="#c5ddab" opacity="0.45"/>
<path d="M1219.9,151.3 L1223.8,154.7 L1217.6,158.4 L1215.0,160.6 L1208.6,160.7 L1198.1,161.3 L1194.3,156.7 L1199.2,151.3 L1198.8,148.0 L1202.8,140.3 L1207.5,139.2 L1214.6,140.9 L1219.3,137.9 L1226.1,146.2 Z" fill="#c5ddab" opacity="0.45"/>
<path d="M1425.6,76.4 L1424.5,80.5 L1420.8,80.3 L1415.3,86.4 L1411.6,81.3 L1406.6,80.7 L1404.6,78.5 L1400.7,76.4 L1408.1,72.7 L1408.4,70.4 L1411.3,66.7 L1415.3,70.1 L1416.4,70.7 L1419.7,73.0 Z" fill="#c5ddab" opacity="0.45"/>
<path d="M1472.9,76.6 L1473.0,79.8 L1469.7,80.4 L1467.4,82.9 L1465.4,83.1 L1461.5,79.8 L1458.7,78.9 L1460.5,76.6 L1458.5,74.5 L1462.6,73.4 L1464.6,71.7 L1467.7,73.0 L1469.5,71.5 L1473.8,73.5 Z" fill="#c5ddab" opacity="0.45"/>
<path d="M1648.6,111.2 L1647.9,114.7 L1643.1,118.4 L1634.3,126.2 L1630.1,122.2 L1624.4,122.2 L1618.1,117.8 L1612.5,111.2 L1624.2,105.6 L1626.2,98.7 L1627.8,102.1 L1634.2,98.4 L1642.7,98.7 L1645.9,107.9 Z" fill="#c5ddab" opacity="0.45"/>
<path d="M1860.9,196.4 L1860.3,201.9 L1855.4,206.8 L1845.9,206.8 L1839.8,203.1 L1836.2,208.1 L1832.5,202.3 L1824.2,196.4 L1829.1,192.2 L1835.3,189.8 L1838.9,183.0 L1847.2,186.7 L1855.3,183.8 L1853.4,189.3 Z" fill="#c5ddab" opacity="0.45"/>
<path d="M1831.8,295.9 L1832.7,300.6 L1825.1,307.3 L1823.2,306.4 L1816.3,304.2 L1813.8,305.1 L1810.5,299.9 L1811.6,295.9 L1809.3,291.0 L1808.1,286.2 L1817.2,286.0 L1822.4,285.4 L1832.1,290.2 L1831.7,290.3 Z" fill="#c5ddab" opacity="0.45"/>
<path d="M1867.2,251.1 L1858.8,255.5 L1861.2,259.0 L1852.1,262.9 L1848.4,257.7 L1842.1,257.2 L1836.8,256.2 L1839.8,251.1 L1837.5,246.0 L1842.7,243.8 L1848.3,241.7 L1854.0,238.1 L1854.8,246.3 L1858.9,246.0 Z" fill="#c5ddab" opacity="0.45"/>
<path d="M1792.5,204.1 L1790.1,208.0 L1789.1,211.0 L1783.2,213.3 L1780.4,208.8 L1775.8,207.6 L1776.3,207.2 L1772.2,204.1 L1769.3,199.5 L1775.7,197.3 L1780.0,192.9 L1783.4,197.6 L1786.6,195.8 L1791.0,200.9 Z" fill="#c5ddab" opacity="0.45"/>
<path d="M1784.0,287.6 L1780.8,290.1 L1778.6,292.5 L1775.3,294.7 L1772.1,292.8 L1767.4,292.5 L1766.6,291.4 L1765.9,287.6 L1763.8,283.5 L1767.4,282.9 L1771.7,279.8 L1775.2,279.9 L1780.9,281.8 L1782.2,284.9 Z" fill="#c5ddab" opacity="0.45"/>
<path d="M1841.4,214.9 L1837.8,220.5 L1832.1,222.8 L1831.0,223.3 L1823.9,222.9 L1819.4,227.2 L1818.2,221.4 L1818.9,214.9 L1811.3,208.7 L1819.5,205.6 L1823.6,201.7 L1830.9,203.4 L1833.9,204.7 L1840.3,209.9 Z" fill="#c5ddab" opacity="0.45"/>
<path d="M1909.0,205.0 L1914.7,208.9 L1906.4,213.9 L1900.4,212.6 L1893.9,219.6 L1887.4,212.0 L1881.4,209.5 L1887.8,205.0 L1885.3,200.1 L1884.9,195.8 L1893.0,195.6 L1901.1,198.3 L1904.4,194.9 L1911.9,198.8 Z" fill="#c5ddab" opacity="0.45"/>
<path d="M1779.4,220.1 L1777.3,223.8 L1773.8,224.9 L1772.6,230.1 L1768.2,225.3 L1766.0,223.8 L1759.3,224.0 L1762.5,220.1 L1760.0,218.2 L1762.4,212.4 L1768.3,211.6 L1772.3,213.9 L1777.6,215.8 L1778.0,217.4 Z" fill="#c5ddab" opacity="0.45"/>
<path d="M1795.5,279.4 L1790.6,282.4 L1790.8,284.3 L1786.4,287.1 L1780.4,287.8 L1773.5,289.2 L1770.7,282.2 L1772.7,279.4 L1775.0,274.0 L1773.2,273.9 L1780.5,272.5 L1785.9,274.0 L1791.2,274.9 L1796.4,275.2 Z" fill="#c5ddab" opacity="0.45"/>
<path d="M1817.6,200.5 L1818.2,203.2 L1814.7,202.8 L1813.2,205.9 L1811.5,204.1 L1808.3,204.8 L1808.0,202.5 L1807.7,200.5 L1807.8,198.7 L1809.6,197.5 L1811.4,197.9 L1813.6,195.5 L1815.4,198.1 L1819.4,198.5 Z" fill="#c5ddab" opacity="0.45"/>
<path d="M740.0,158.0 L745.4,158.2 L752.0,160.0 L756.4,162.8 L756.7,169.6 L761.7,170.7 L765.0,174.3 L768.0,180.0 L770.5,186.7 L774.1,190.7 L774.3,194.5 L776.4,201.0 L780.0,205.0 L778.5,211.0 L776.1,214.0 L775.0,220.0 L771.1,218.4 L766.3,214.4 L760.0,210.0 L758.1,205.9 L753.0,200.1 L750.5,193.3 L746.3,189.2 L745.0,185.0 L743.1,180.3 L744.6,174.0 L743.6,170.6 L742.6,162.9 Z" fill="#cfe4b3"/>
<path d="M695.0,170.0 L700.5,171.5 L708.0,175.0 L708.3,178.9 L711.2,186.4 L713.4,189.9 L714.2,196.1 L715.0,200.0 L715.5,205.6 L720.5,211.0 L721.9,214.9 L721.8,221.0 L725.0,225.0 L723.8,231.1 L725.4,234.6 L722.8,241.6 L723.3,243.8 L720.5,248.7 L722.7,256.1 L719.4,261.2 L720.0,265.0 L716.7,263.9 L709.5,261.8 L705.0,260.0 L701.2,253.3 L701.7,250.5 L697.6,246.6 L695.0,240.0 L694.8,236.3 L696.2,229.0 L694.1,224.3 L694.1,220.3 L694.1,214.7 L693.7,211.5 L694.5,204.8 L695.3,201.5 L694.7,196.5 L695.0,190.1 L695.1,183.3 L694.8,178.9 L693.2,176.1 Z" fill="#cfe4b3"/>
<path d="M697.0,250.0 L700.8,253.9 L707.8,258.2 L712.0,262.0 L713.4,266.7 L716.2,272.2 L716.6,276.0 L719.1,279.6 L722.0,285.0 L719.0,290.0 L714.2,295.9 L710.0,300.0 L707.2,296.5 L701.7,293.4 L697.0,290.0 L697.0,285.7 L696.8,280.1 L696.9,276.6 L697.7,271.4 L698.6,264.1 L697.2,261.6 L698.2,253.7 Z" fill="#cfe4b3"/>
<path d="M788.0,258.0 L792.6,259.8 L800.0,262.0 L802.5,264.4 L806.5,269.3 L812.0,272.0 L818.0,278.9 L822.0,283.0 L820.0,290.0 L812.8,287.8 L808.0,284.0 L804.2,278.7 L800.7,277.7 L795.0,272.0 L791.7,269.0 L790.0,262.6 Z" fill="#cfe4b3"/>
<path d="M780.0,303.0 L786.8,304.9 L788.8,304.1 L795.0,305.0 L796.7,309.4 L797.2,314.3 L800.0,320.0 L800.8,323.3 L800.0,330.0 L794.2,329.8 L786.3,329.4 L782.0,330.0 L782.0,324.6 L779.6,320.9 L781.8,315.5 L779.0,307.6 Z" fill="#cfe4b3"/>
<path d="M757.0,313.0 L761.3,313.7 L768.2,311.0 L775.0,312.0 L779.2,318.5 L784.0,322.0 L784.0,330.0 L779.7,329.1 L771.9,331.5 L768.1,330.7 L760.9,328.4 L757.0,330.0 L757.7,324.1 L755.5,320.2 Z" fill="#cfe4b3"/>
<path d="M755.0,235.0 L762.0,234.6 L768.0,232.0 L768.5,239.8 L772.0,245.0 L763.4,248.8 L758.0,250.0 L756.8,244.4 L756.2,241.5 Z" fill="#cfe4b3"/>
<path d="M700.0,320.0 L704.2,317.3 L710.1,316.4 L713.6,314.8 L718.4,313.6 L724.3,312.6 L730.0,312.0 L735.9,312.2 L740.0,312.8 L744.4,313.3 L749.1,314.3 L755.8,317.2 L760.0,318.0 L763.9,319.1 L771.6,318.9 L776.1,321.3 L780.0,323.9 L784.6,323.9 L790.0,325.0 L795.7,327.7 L799.4,328.2 L805.7,328.5 L809.7,328.5 L815.0,330.0 L817.4,331.7 L821.5,336.9 L826.1,337.8 L829.5,343.2 L835.0,345.0 L839.7,350.6 L840.9,354.1 L845.0,360.0 L844.3,364.9 L843.8,369.8 L844.1,376.7 L846.7,380.2 L844.1,386.7 L844.3,389.5 L843.2,394.6 L844.9,400.0 L843.9,405.0 L843.2,409.2 L843.5,414.6 L843.4,418.3 L844.3,424.0 L845.3,430.1 L845.9,435.6 L845.0,440.0 L843.3,446.4 L839.6,449.4 L839.2,453.7 L835.0,460.0 L830.8,463.8 L823.4,467.9 L820.0,470.0 L816.4,469.2 L810.8,468.6 L803.7,466.3 L800.0,465.0 L796.3,462.5 L793.6,458.7 L789.1,455.2 L785.0,450.0 L780.7,449.4 L774.0,445.8 L768.7,445.7 L765.0,445.0 L758.6,448.7 L755.2,450.5 L750.5,453.2 L745.0,455.0 L740.0,452.0 L736.1,453.4 L730.0,451.4 L725.0,450.0 L722.6,444.4 L719.9,441.1 L714.5,437.2 L713.8,432.9 L710.0,430.0 L707.6,426.7 L703.5,419.6 L700.2,415.7 L697.0,410.0 L697.6,405.4 L696.8,398.5 L694.7,394.1 L696.5,389.3 L695.6,383.2 L695.0,380.0 L693.8,374.2 L696.5,370.7 L696.9,364.2 L696.7,359.9 L697.0,353.6 L698.9,348.9 L699.6,346.6 L696.6,339.9 L699.9,336.7 L699.0,329.2 L698.5,326.6 Z" fill="#cfe4b3"/>
<path d="M735.0,455.0 L739.0,455.9 L743.7,456.3 L751.6,455.5 L756.2,457.4 L760.0,458.0 L766.4,461.1 L769.0,464.2 L775.0,463.5 L778.2,467.6 L785.0,470.0 L788.2,473.5 L790.4,477.8 L794.3,483.7 L796.5,487.6 L802.9,489.5 L805.0,495.0 L801.5,499.1 L796.4,500.9 L790.0,505.0 L784.5,503.6 L781.8,503.3 L774.5,501.7 L769.2,499.4 L765.0,500.0 L759.6,498.2 L756.2,495.6 L752.1,490.2 L749.0,486.9 L745.0,485.0 L742.9,481.6 L743.1,476.1 L740.5,471.5 L739.9,465.2 L737.5,458.4 Z" fill="#cfe4b3"/>
<path d="M770.0,470.0 L775.8,471.5 L780.9,473.9 L784.2,473.4 L791.5,475.3 L794.9,477.8 L800.0,480.0 L804.3,482.5 L811.7,482.5 L815.6,484.3 L820.2,486.3 L823.8,487.1 L830.0,490.0 L833.9,494.8 L840.0,495.7 L845.0,500.0 L846.5,506.8 L844.8,508.7 L843.9,513.5 L844.4,518.5 L844.1,524.1 L845.3,531.4 L845.9,534.7 L844.7,540.1 L845.0,545.0 L839.6,544.4 L833.4,544.2 L830.0,545.0 L827.7,540.7 L822.0,539.5 L819.3,535.0 L813.2,532.1 L810.0,530.0 L804.6,527.3 L801.6,526.3 L796.3,520.8 L790.0,520.0 L785.3,516.8 L785.4,511.9 L781.3,506.2 L777.6,505.5 L775.0,500.0 L775.3,496.3 L775.0,489.1 L771.1,483.8 L771.7,480.7 L772.4,475.8 Z" fill="#cfe4b3"/>
<path d="M695.0,488.0 L701.2,488.0 L706.2,486.2 L712.0,485.0 L712.8,491.0 L716.0,496.5 L720.0,499.3 L722.0,505.0 L720.0,509.1 L721.2,515.7 L718.6,518.5 L719.4,525.3 L718.3,529.0 L718.0,535.0 L712.4,534.9 L705.3,538.2 L700.0,540.0 L700.4,535.5 L698.9,529.9 L695.3,524.1 L695.0,520.0 L696.7,515.4 L694.3,507.6 L695.0,504.6 L694.7,497.8 L695.6,494.9 Z" fill="#cfe4b3"/>
<path d="M715.0,525.0 L719.0,523.9 L724.4,525.9 L730.7,525.7 L736.1,528.3 L740.0,528.0 L745.0,529.9 L751.7,533.3 L756.2,536.0 L760.0,540.0 L757.3,546.9 L755.9,553.6 L755.0,558.0 L750.0,557.3 L744.0,558.5 L740.6,560.8 L733.7,559.2 L730.0,560.0 L724.0,557.7 L718.7,550.4 L715.0,548.0 L713.4,541.9 L716.4,537.9 L715.8,532.5 Z" fill="#cfe4b3"/>
<path d="M695.0,566.0 L701.6,566.2 L703.9,569.2 L710.9,566.7 L715.6,568.8 L720.0,570.0 L724.5,572.4 L728.8,574.2 L734.2,578.5 L741.6,580.6 L745.0,585.0 L747.5,588.9 L746.2,596.2 L748.7,599.8 L746.7,604.9 L748.7,611.5 L750.0,615.0 L743.9,616.5 L741.4,617.3 L734.7,622.1 L731.0,621.3 L725.0,625.0 L718.3,621.4 L716.5,620.1 L710.9,620.4 L704.4,616.2 L700.0,615.0 L700.0,610.4 L695.8,605.8 L695.0,600.0 L694.3,593.5 L693.2,589.6 L696.5,583.5 L696.6,575.6 L694.0,571.6 Z" fill="#cfe4b3"/>
<path d="M800.0,583.0 L806.6,585.3 L809.6,583.4 L815.0,585.0 L816.7,590.0 L820.5,593.9 L822.1,600.9 L823.0,605.0 L823.2,611.0 L821.4,614.4 L819.4,619.5 L820.0,623.5 L818.0,630.0 L811.9,630.2 L807.1,627.1 L803.0,628.0 L800.1,622.4 L799.9,618.2 L800.6,612.5 L798.0,605.0 L797.7,598.0 L797.5,594.0 L800.3,588.3 Z" fill="#cfe4b3"/>
<path d="M786.0,538.0 L790.5,538.7 L797.0,540.0 L797.4,545.6 L797.9,551.2 L797.6,553.6 L797.0,560.0 L793.2,558.3 L787.0,558.0 L787.0,552.5 L787.4,546.9 L785.3,542.1 Z" fill="#cfe4b3"/>
<path d="M828.0,620.0 L832.8,620.4 L840.0,618.0 L842.8,624.4 L845.0,632.0 L838.6,637.8 L833.0,640.0 L831.8,634.0 L831.6,630.6 L831.0,623.6 Z" fill="#cfe4b3"/>
<path d="M695.0,700.0 L699.2,698.1 L704.7,695.5 L706.1,690.3 L712.0,688.0 L716.6,687.5 L725.7,689.6 L730.0,690.0 L733.9,693.9 L736.1,698.6 L736.3,704.2 L741.2,706.2 L742.0,712.0 L745.0,716.8 L746.3,720.2 L748.7,723.9 L751.8,729.7 L755.9,732.6 L758.0,738.0 L759.1,742.4 L764.3,746.9 L765.8,751.9 L770.4,758.2 L770.6,761.6 L775.0,768.0 L777.1,772.8 L780.4,775.7 L781.1,782.4 L784.4,785.5 L786.5,792.5 L788.9,795.7 L792.0,800.0 L794.3,804.3 L799.0,810.9 L800.1,812.6 L804.2,817.2 L804.5,824.3 L808.9,828.6 L812.0,832.0 L815.0,838.0 L818.5,840.1 L820.3,846.2 L825.8,852.1 L827.2,855.8 L832.0,860.0 L835.9,865.0 L839.4,869.2 L845.0,875.0 L845.1,881.5 L845.0,885.0 L838.6,885.0 L836.1,886.7 L828.9,883.7 L826.6,886.7 L819.9,883.4 L816.5,884.6 L811.5,885.4 L806.2,883.8 L801.0,884.0 L794.7,886.2 L791.2,883.9 L784.0,884.6 L780.1,884.6 L773.6,884.1 L770.8,886.4 L763.3,885.2 L760.9,883.3 L756.2,883.6 L750.4,885.2 L745.0,885.0 L742.1,879.3 L738.0,875.3 L735.0,870.0 L730.4,865.6 L726.1,859.8 L722.0,855.0 L717.0,849.8 L715.3,842.7 L712.0,838.0 L710.9,833.7 L707.8,826.2 L706.0,822.0 L702.2,816.6 L697.3,813.8 L695.0,810.0 L693.5,804.8 L695.0,798.3 L695.5,793.5 L695.8,791.0 L695.0,783.4 L695.0,779.6 L696.6,773.7 L696.3,771.8 L695.8,766.1 L693.9,761.7 L695.0,756.6 L696.5,748.8 L696.0,746.6 L693.4,739.5 L695.9,733.8 L696.4,729.2 L696.1,723.7 L695.0,721.5 L693.9,714.1 L695.0,709.3 L693.3,703.9 Z" fill="#cfe4b3"/>
<path d="M740.0,705.0 L743.8,707.3 L750.6,707.9 L753.8,708.3 L760.0,708.0 L761.6,712.4 L766.5,716.0 L770.3,720.9 L772.0,725.0 L770.5,731.4 L767.1,736.8 L767.2,739.6 L765.0,745.0 L760.4,740.8 L755.4,738.6 L748.0,735.0 L746.2,731.0 L745.1,723.8 L744.9,718.4 L743.8,714.1 L741.8,711.7 Z" fill="#cfe4b3"/>
<path d="M770.0,735.0 L775.3,738.1 L779.3,738.2 L783.3,741.2 L790.0,745.0 L792.4,749.8 L794.0,756.4 L794.7,759.0 L798.6,763.3 L800.0,770.0 L793.2,770.0 L788.6,770.5 L784.0,771.8 L780.0,772.0 L778.9,765.6 L777.6,761.3 L774.4,757.7 L773.4,749.6 L771.4,746.1 L772.8,741.3 Z" fill="#cfe4b3"/>
<path d="M725.0,354.0 L729.6,352.1 L733.0,352.6 L740.2,350.4 L745.0,350.0 L749.2,354.8 L754.1,360.9 L756.0,365.0 L753.7,371.9 L751.5,375.8 L752.0,381.0 L746.6,380.5 L740.2,383.1 L735.0,382.7 L732.0,383.0 L732.4,375.8 L728.0,371.8 L727.8,366.2 L727.7,358.5 Z" fill="#f4efd2"/>
<path d="M739.0,390.0 L743.5,388.5 L747.7,390.1 L755.9,388.6 L760.0,387.0 L762.4,392.0 L769.6,394.2 L773.0,398.0 L770.0,402.8 L765.0,408.0 L758.9,406.9 L753.9,407.2 L749.3,410.5 L745.0,410.0 L744.3,406.4 L742.8,399.1 L740.7,394.7 Z" fill="#f4efd2"/>
<path d="M695.0,383.0 L702.7,381.6 L708.0,380.0 L709.4,385.6 L714.5,388.9 L715.0,395.0 L715.0,399.6 L712.0,408.0 L705.4,407.6 L701.6,411.1 L695.0,410.0 L696.0,403.9 L696.5,398.5 L694.0,395.4 L695.5,389.2 Z" fill="#f4efd2"/>
<path d="M826.0,330.0 L833.0,331.9 L838.5,331.4 L845.0,330.0 L845.8,336.4 L844.7,340.9 L845.3,344.2 L843.8,350.5 L843.3,356.6 L843.6,358.1 L843.4,366.7 L844.4,368.6 L843.1,373.2 L845.8,380.5 L845.8,385.9 L843.3,390.4 L844.5,396.3 L846.3,401.6 L843.3,406.5 L846.7,411.8 L843.4,413.8 L845.0,420.0 L838.4,413.1 L835.0,410.0 L835.2,406.2 L833.2,401.3 L832.0,394.1 L828.7,388.4 L830.2,383.8 L828.0,380.0 L826.6,374.7 L824.8,369.0 L825.1,365.9 L824.8,359.3 L826.5,355.0 L824.0,350.0 L825.9,345.5 L823.1,339.7 L825.2,336.1 Z" fill="#f4efd2"/>
<path d="M785.0,420.0 L789.4,422.1 L795.2,421.4 L801.4,422.1 L805.0,425.0 L808.6,428.7 L807.7,433.8 L812.0,440.0 L809.0,445.9 L802.0,448.0 L800.0,452.0 L794.3,450.9 L787.4,447.3 L783.0,445.0 L782.8,441.3 L782.8,436.8 L783.3,428.9 L785.4,425.0 Z" fill="#f4efd2"/>
<path d="M695.0,330.0 L699.1,329.9 L704.7,329.8 L712.0,328.0 L717.8,334.1 L722.0,338.0 L718.5,341.4 L713.6,345.6 L710.0,350.0 L706.6,347.7 L701.6,346.8 L695.0,348.0 L693.8,341.1 L696.6,336.0 Z" fill="#f4efd2"/>
<path d="M760.0,335.0 L764.5,337.3 L768.9,336.3 L775.1,338.3 L780.0,338.0 L784.0,344.6 L786.0,350.0 L780.1,351.3 L774.0,355.4 L770.0,356.0 L764.6,353.0 L758.0,348.0 L757.7,341.3 Z" fill="#f4efd2"/>
<path d="M735.0,770.0 L741.0,771.5 L743.7,772.4 L751.4,772.8 L755.0,775.0 L757.5,777.9 L762.9,783.4 L764.5,784.5 L768.4,788.7 L772.9,791.6 L775.8,795.3 L780.0,800.0 L784.5,805.3 L784.1,810.6 L786.9,812.9 L792.9,818.8 L794.7,822.0 L795.6,827.2 L798.0,830.1 L801.8,833.9 L805.0,840.0 L807.5,845.3 L811.4,848.6 L814.0,852.7 L815.1,857.5 L818.9,862.3 L823.6,865.5 L825.0,870.0 L826.9,875.9 L828.0,879.0 L830.0,885.0 L825.8,886.4 L821.0,885.7 L816.3,885.6 L810.5,884.8 L804.3,885.5 L798.6,884.7 L796.0,885.8 L790.0,885.0 L787.3,879.7 L783.5,876.1 L781.1,871.5 L778.1,869.0 L773.2,863.7 L772.3,858.3 L768.1,856.1 L765.0,850.0 L760.8,845.8 L758.8,842.3 L759.1,836.9 L753.6,832.8 L752.6,828.9 L750.0,824.3 L748.7,819.5 L745.0,815.0 L743.6,811.6 L741.7,805.7 L741.3,800.9 L739.2,796.7 L738.9,788.4 L737.5,784.6 L735.5,779.7 L735.8,775.7 Z" fill="#c3ddaa" opacity="0.85"/>
<path d="M1156.2,60.0 L1152.7,67.3 L1151.6,71.1 L1146.0,72.0 L1140.0,75.1 L1136.8,71.5 L1131.6,68.8 L1128.3,67.5 L1124.3,63.0 L1118.3,60.0 L1124.7,53.4 L1128.3,48.8 L1132.6,45.7 L1140.0,46.2 L1145.2,45.6 L1150.9,46.8 L1155.3,54.6 Z" fill="#c3ddaa" opacity="0.35"/>
<path d="M1220.8,120.0 L1222.0,124.7 L1217.0,129.7 L1210.0,132.4 L1201.0,128.9 L1192.0,127.0 L1198.6,120.0 L1192.2,113.3 L1196.8,109.6 L1203.8,108.0 L1210.0,112.3 L1215.5,107.2 L1219.7,112.1 L1225.5,115.3 Z" fill="#c3ddaa" opacity="0.35"/>
<path d="M1510.2,60.0 L1512.4,63.6 L1514.7,69.4 L1509.4,72.0 L1504.2,75.7 L1498.8,77.2 L1490.0,78.7 L1482.3,79.0 L1477.5,77.2 L1472.0,73.6 L1466.8,69.7 L1469.9,65.8 L1472.0,60.0 L1470.1,50.9 L1474.3,46.6 L1479.2,42.9 L1486.0,43.5 L1490.0,46.7 L1499.3,49.6 L1504.7,52.4 L1509.4,54.4 Z" fill="#c3ddaa" opacity="0.35"/>
<path d="M1618.5,40.0 L1623.4,45.8 L1626.2,52.2 L1621.5,54.6 L1616.7,59.9 L1612.0,61.6 L1606.5,61.0 L1600.0,58.7 L1593.8,55.7 L1588.0,54.0 L1582.9,51.3 L1573.2,50.2 L1575.0,46.0 L1575.9,40.0 L1578.7,30.7 L1581.1,26.4 L1586.3,20.7 L1594.3,21.4 L1600.0,21.9 L1605.0,21.9 L1612.8,23.0 L1616.5,25.0 L1624.5,29.2 L1628.5,31.9 L1624.0,36.8 Z" fill="#c3ddaa" opacity="0.35"/>
<path d="M1728.6,60.0 L1724.3,64.1 L1721.0,68.5 L1717.3,72.8 L1712.7,74.5 L1705.0,73.8 L1700.0,72.7 L1692.4,71.9 L1687.5,73.3 L1683.2,69.7 L1677.1,65.8 L1682.3,60.0 L1680.9,54.8 L1676.9,50.0 L1680.8,48.4 L1687.6,47.6 L1694.1,45.7 L1700.0,41.2 L1707.3,44.8 L1711.7,48.6 L1716.9,52.5 L1722.5,55.1 Z" fill="#c3ddaa" opacity="0.35"/>
<path d="M1849.7,120.0 L1842.0,124.3 L1836.0,132.2 L1830.0,136.5 L1823.5,133.6 L1820.8,130.2 L1818.3,124.3 L1809.4,120.0 L1812.0,115.0 L1817.1,112.4 L1823.7,107.1 L1830.0,104.4 L1835.8,106.8 L1840.4,112.1 L1846.9,112.8 Z" fill="#c3ddaa" opacity="0.35"/>
<path d="M1872.2,250.0 L1878.9,254.5 L1873.6,257.9 L1867.9,262.6 L1860.0,265.6 L1854.2,263.1 L1851.1,257.7 L1845.8,256.6 L1842.7,250.0 L1848.1,242.5 L1851.8,238.0 L1860.0,238.1 L1868.3,237.0 L1874.9,240.7 L1880.2,242.5 L1875.7,246.6 Z" fill="#c3ddaa" opacity="0.35"/>
<path d="M1543.7,120.0 L1536.6,125.5 L1533.7,130.5 L1528.6,133.7 L1520.0,134.2 L1510.4,133.8 L1506.4,130.8 L1501.2,125.4 L1508.0,120.0 L1505.2,113.3 L1509.1,106.3 L1514.1,104.2 L1520.0,104.6 L1525.6,106.4 L1530.9,106.4 L1536.3,114.6 Z" fill="#c3ddaa" opacity="0.35"/>
<path d="M1920.0,150.0 L1920.0,172.0 L1916.5,179.0 L1897.0,186.0 L1877.0,196.3 L1855.0,209.8 L1833.5,220.7 L1820.0,234.2 L1811.6,250.0 L1809.8,257.2 L1814.4,262.7 L1809.0,269.0 L1803.5,275.3 L1810.7,279.0 L1814.4,286.2 L1818.0,293.4 L1821.6,298.0 L1818.0,300.6 L1812.5,300.6 L1802.6,306.0 L1792.0,306.0 L1780.0,313.3 L1768.4,315.6 L1746.7,318.3 L1741.2,328.0 L1725.0,336.0 L1717.0,342.7 L1717.0,369.9 L1706.0,386.1 L1692.4,402.4 L1687.0,400.0 L1687.0,885.0 L1920.0,885.0 Z" fill="#86c8f5"/>
<path d="M1198.0,97.0 L1217.0,83.0 L1235.0,67.0 L1254.0,54.0 L1277.0,44.0 L1292.0,27.0 L1308.0,4.0 L1325.0,0.0 L1340.0,8.0 L1362.0,12.5 L1377.0,21.0 L1400.0,42.0 L1406.0,58.0 L1412.5,73.0 L1406.0,92.0 L1404.0,96.0 L1371.0,100.0 L1350.0,109.0 L1335.0,106.0 L1323.0,92.0 L1310.0,88.5 L1302.0,98.0 L1308.0,81.0 L1317.0,72.0 L1329.0,69.0 L1312.5,68.0 L1300.0,77.0 L1287.5,84.0 L1267.0,95.0 L1246.0,105.0 L1231.0,92.0 L1208.0,100.0 Z" fill="#86c8f5"/>
<path d="M1328.4,161.0 L1344.7,135.5 L1358.0,132.8 L1365.0,129.4 L1388.0,124.0 L1405.6,128.7 L1400.2,138.2 L1402.9,153.1 L1392.0,161.0 Z" fill="#86c8f5"/>
<path d="M1410.0,128.0 L1430.0,124.7 L1433.0,117.0 L1462.5,120.6 L1503.0,123.3 L1530.0,136.9 L1543.7,153.0 L1550.5,161.0 L1450.3,161.0 L1427.3,147.7 L1412.4,134.2 Z" fill="#86c8f5"/>
<path d="M695.0,822.0 L704.0,828.0 L706.6,842.0 L704.0,851.0 L713.5,858.0 L722.8,865.0 L734.0,877.0 L741.0,885.0 L695.0,885.0 Z" fill="#86c8f5"/>
<path d="M1873.0,0.0 L1920.0,0.0 L1920.0,1.5 L1904.7,6.8 L1882.0,19.2 L1863.0,32.5 L1851.0,26.0 L1858.0,16.0 Z" fill="#86c8f5"/>
<path d="M1687.0,159.0 L1700.0,153.0 L1715.0,147.0 L1735.0,136.0 L1760.0,118.0 L1785.0,105.0 L1800.0,96.0 L1820.0,83.0 L1840.0,69.0 L1838.0,73.0 L1818.0,87.0 L1798.0,100.0 L1763.0,121.0 L1738.0,139.0 L1718.0,150.0 L1700.0,157.0 L1687.0,162.0 Z" fill="#86c8f5"/>
<path d="M772.0,276.0 L772.4,272.5 L774.0,268.0 L776.5,272.0 L775.0,278.6 Z" fill="#86c8f5"/>
<path d="M772.6,290.0 L774.7,285.0 L775.0,281.0 L777.4,284.9 L779.4,288.0 L774.0,291.0 Z" fill="#86c8f5"/>
<path d="M742.0,60.0 L748.0,58.0 L752.0,62.0 L755.9,59.4 L760.0,58.0 L764.5,57.0 L770.0,55.0 L774.6,53.4 L778.0,52.0 L780.7,48.6 L785.0,44.0 L789.0,45.0 L791.0,49.5 L792.0,55.0 L793.0,62.0 L790.0,58.0 L786.0,52.0 L783.2,55.8 L780.0,58.0 L776.8,60.0 L772.0,62.0 L768.0,63.2 L763.4,63.4 L760.0,65.0 L754.4,65.9 L750.0,66.0 L745.0,68.0 L743.2,64.1 Z" fill="#86c8f5"/>
<path d="M1736.0,186.0 L1740.0,187.0 L1740.1,191.4 L1740.0,194.8 L1741.0,200.0 L1741.7,204.7 L1739.5,210.3 L1740.0,215.0 L1736.0,213.0 L1736.2,208.0 L1735.5,204.0 L1735.0,200.0 L1735.4,194.4 L1734.7,191.6 Z" fill="#86c8f5"/>
<path d="M1103.0,42.0 L1108.0,40.5 L1111.6,38.5 L1116.3,37.4 L1120.0,36.0 L1125.4,37.0 L1129.6,37.9 L1133.0,36.6 L1138.0,38.0 L1135.9,42.4 L1135.0,48.0 L1130.2,47.5 L1127.1,49.5 L1122.9,50.1 L1119.8,48.7 L1115.0,50.0 L1111.2,47.1 L1106.2,45.6 Z" fill="#86c8f5"/>
<path d="M1127.0,78.0 L1131.5,77.1 L1137.0,76.0 L1138.8,80.9 L1140.0,84.0 L1135.3,84.8 L1130.0,86.0 L1128.4,81.3 Z" fill="#86c8f5"/>
<path d="M1148.0,113.0 L1153.9,113.5 L1158.0,112.0 L1158.4,115.6 L1160.0,121.0 L1154.5,121.7 L1150.0,123.0 L1149.8,118.8 Z" fill="#86c8f5"/>
<path d="M1433.0,31.0 L1438.0,27.1 L1442.2,25.4 L1446.0,22.0 L1447.0,25.0 L1443.3,28.6 L1438.1,29.6 L1435.0,33.0 Z" fill="#86c8f5"/>
<path d="M1515.0,20.0 L1519.0,21.0 L1519.0,26.4 L1518.0,30.0 L1515.0,29.0 L1515.4,24.1 Z" fill="#86c8f5"/>
<path d="M1542.0,8.0 L1547.2,6.5 L1552.0,4.0 L1555.2,6.6 L1560.0,10.0 L1563.5,11.2 L1568.0,14.0 L1567.0,18.3 L1566.0,24.0 L1560.5,20.3 L1556.0,18.0 L1550.9,16.0 L1545.0,16.0 L1543.9,11.4 Z" fill="#86c8f5"/>
<path d="M1500.0,76.0 L1504.0,78.0 L1502.7,82.9 L1502.8,86.9 L1503.0,90.0 L1500.0,88.0 L1500.7,84.8 L1499.3,79.9 Z" fill="#86c8f5"/>
<path d="M1542.0,80.0 L1545.0,80.0 L1544.2,85.2 L1545.7,88.9 L1545.0,93.0 L1542.0,92.0 L1541.9,87.7 L1542.6,84.0 Z" fill="#86c8f5"/>
<path d="M1568.0,82.0 L1575.0,80.0 L1577.3,83.3 L1578.4,87.1 L1581.0,92.0 L1575.0,97.0 L1572.9,93.6 L1570.0,90.0 L1568.3,86.7 Z" fill="#86c8f5"/>
<path d="M1579.0,58.0 L1585.0,56.0 L1586.0,63.0 L1580.0,63.0 Z" fill="#86c8f5"/>
<path d="M1612.0,65.0 L1613.5,61.2 L1615.3,57.2 L1618.0,54.0 L1622.0,56.0 L1620.7,61.2 L1618.0,67.0 Z" fill="#86c8f5"/>
<path d="M1622.0,62.0 L1625.3,61.0 L1630.0,60.0 L1630.6,64.8 L1631.2,69.0 L1633.0,72.0 L1628.1,71.8 L1625.0,70.0 L1623.8,65.4 Z" fill="#86c8f5"/>
<path d="M1640.0,60.0 L1645.0,58.6 L1650.0,58.0 L1650.2,62.1 L1651.1,68.3 L1652.0,72.0 L1651.7,76.9 L1648.5,79.6 L1648.0,84.0 L1644.8,79.1 L1640.0,76.0 L1640.5,71.6 L1641.0,67.0 L1640.6,63.7 Z" fill="#86c8f5"/>
<path d="M1659.0,95.0 L1661.8,89.5 L1666.0,86.0 L1670.0,90.0 L1668.0,93.1 L1664.0,95.9 L1662.0,99.0 Z" fill="#86c8f5"/>
<path d="M1626.0,22.0 L1628.8,17.1 L1630.1,12.6 L1632.0,9.0 L1635.0,12.0 L1632.4,16.5 L1631.4,19.4 L1629.0,24.0 Z" fill="#86c8f5"/>
<path d="M1655.0,22.0 L1657.5,18.8 L1661.9,17.3 L1665.0,15.0 L1670.0,20.0 L1664.5,21.4 L1660.0,24.0 Z" fill="#86c8f5"/>
<path d="M1532.0,118.0 L1536.6,117.1 L1541.3,115.5 L1545.0,114.0 L1549.4,113.8 L1555.5,115.1 L1560.0,116.0 L1555.0,121.0 L1550.4,120.1 L1545.6,120.7 L1540.0,121.0 L1536.7,120.2 Z" fill="#86c8f5"/>
<g fill="none" stroke="#86c8f5" stroke-linejoin="round"><path d="M845,39 L861.8,43.8 L869.2,38.2 L882.3,37.3 L895.3,41 L899,52.2 L906.5,54 L908.4,61.5 L919.6,64.3 L940,61.5" stroke-width="3.2"/><path d="M930.7,64.3 L932.6,72.7 L943.8,78.3 L949.4,95 L956.8,104.4 L953,121 L962.4,134 L960.6,143.5 L964.3,160" stroke-width="2.4"/><path d="M695,52 L720,60 L745,61 L770,57 L790,46 L800,43 L845,38" stroke-width="1.3"/><path d="M695,411 L715,394 L746,381 L780,367 L807,350 L830,345" stroke-width="1.2" opacity="0.8"/><path d="M760,445 L790,448 L807,450 L806,470 L803.6,498 L783,535 L777,560 L773,590 L766,606 L773,637 L785,656" stroke-width="1.2" opacity="0.8"/></g>
<g fill="none" stroke="#f3c97f" stroke-width="1.2" opacity="0.85"><path d="M845,85.7 L873,91.3 L1038.8,90.4 L1065,92.3 L1078,104.4 L1100,134.2 L1130,160"/><path d="M1055,4 L1058,56 L1065,93 L1062,160"/><path d="M695,140 L720,138 L750,120 L790,100 L830,80 L845,80"/><path d="M787,230 L790,255.4 L813.3,257.7 L826.8,266 L829,284 L834.2,295.5 L831.4,309 L833.6,320.4 L833,410 L835,480"/><path d="M695,297.8 L783.9,297.8 L798.6,308 L813.3,315.9 L817.8,320.4 L846,320.4"/><path d="M695,455 L730,470 L790,480 L845,470" /><path d="M695,560 L720,545 L790,548 L845,545"/><path d="M1430,0 L1440,30 L1450,80 L1460,115 L1500,117 L1530,108 L1600,115 L1640,130 L1669,152"/><path d="M1687,200 L1720,215 L1760,230 L1800,275 L1812,300"/><path d="M740,700 L760,730 L775,760 L790,800"/></g>
<g fill="none" stroke="#aaa69e" stroke-width="1.1" stroke-dasharray="2.3 1.1"><path d="M855.8,3 L855.8,161"/><path d="M855.8,130.5 L1070.5,130.5"/><path d="M1051,3.7 L1055.6,18.6 L1061.2,56 L1065,93.2 L1070.5,130.5 L1072.4,160"/><path d="M695,169.3 L845,169.3"/><path d="M695,326.4 L845,326.4"/><path d="M712,326 L712,671"/><path d="M695,475 L845,475"/><path d="M780,655 L845,655"/><path d="M712,671 L715,700 L722,740 L730,770 L728,800 L735,820 L760,825 L780,840 L800,850 L830,830 L845,830"/><path d="M1560,0 L1560,60 L1562,70"/><path d="M1740,150 L1738,300"/><path d="M1770,170 L1762,300"/><path d="M1730,258 L1790,260"/><path d="M1730,285 L1800,290"/><path d="M1840,160 L1845,230"/></g>
<g fill="none" stroke="#8a8a8a" stroke-width="1.3"><path d="M1275,45 L1305,31 L1407,95"/><path d="M1441,131 L1490,161"/></g>
<path d="M1455,130 L1475,128 L1499,136 L1497,146 L1475,140 L1458,136 Z" fill="#d9e8bf"/>
<g fill="none" stroke="#000" stroke-linejoin="round" stroke-linecap="round"><path d="M695,1.5 L1113,1.5" stroke-width="3.6"/><path d="M1123.0,0.0 L1124.0,4.7 L1125.0,11.0 L1129.7,12.5 L1133.6,13.8 L1136.5,16.3 L1140.8,16.8 L1144.8,19.1 L1149.0,20.5 L1153.7,19.6 L1160.0,18.6 L1164.4,19.4 L1168.4,20.5 L1174.1,21.5 L1177.8,22.0 L1182.6,22.4 L1185.5,26.2 L1188.2,29.8 L1192.0,32.6 L1199.0,29.0 L1203.6,32.0 L1206.7,35.0 L1210.5,37.2 L1214.3,41.0 L1218.8,39.1 L1221.3,37.4 L1225.1,37.1 L1228.5,34.4 L1233.0,33.6 L1238.5,39.0 L1242.9,39.1 L1245.9,40.4 L1250.9,40.8 L1255.2,40.8 L1259.0,42.0 L1263.6,42.8 L1266.3,42.3 L1271.0,43.4 L1275.0,43.8 L1270.4,45.2 L1266.4,47.3 L1262.5,50.5 L1257.6,52.1 L1254.0,54.0 L1250.6,56.1 L1246.9,59.9 L1242.4,61.7 L1239.3,64.4 L1235.0,67.0 L1231.8,70.4 L1229.4,72.1 L1225.6,74.7 L1222.9,78.4 L1220.5,81.0 L1217.0,83.0 L1213.7,86.4 L1208.7,88.6 L1206.3,92.1 L1201.4,94.1 L1198.0,97.0 L1203.2,98.3 L1208.0,100.0 L1211.9,98.0 L1215.6,97.3 L1218.7,95.4 L1224.1,95.1 L1227.9,93.5 L1231.0,92.0 L1235.2,95.9 L1239.1,97.8 L1242.5,101.4 L1246.0,105.0 L1250.5,102.6 L1254.5,101.7 L1258.8,98.6 L1262.8,96.9 L1267.0,95.0 L1271.8,92.5 L1274.9,90.8 L1278.7,88.6 L1284.1,86.2 L1287.5,84.0 L1291.3,81.6 L1295.9,78.8 L1300.0,77.0 L1303.6,73.4 L1308.0,70.9 L1312.5,68.0 L1316.3,67.8 L1320.1,68.6 L1325.4,68.9 L1329.0,69.0 L1325.1,70.2 L1320.5,71.3 L1317.0,72.0 L1313.9,75.1 L1311.2,78.0 L1308.0,81.0 L1306.2,84.8 L1304.6,89.5 L1303.3,93.9 L1302.0,98.0 L1303.9,94.6 L1307.9,91.2 L1310.0,88.5 L1314.4,89.7 L1318.3,91.6 L1323.0,92.0 L1325.7,95.9 L1328.5,98.3 L1332.6,102.4 L1335.0,106.0 L1339.3,106.8 L1344.9,108.4 L1350.0,109.0 L1353.6,106.8 L1359.1,105.8 L1362.0,103.3 L1366.6,102.1 L1371.0,100.0 L1375.2,100.1 L1379.5,99.0 L1383.4,98.9 L1387.4,98.0 L1391.5,97.8 L1395.7,96.4 L1399.6,95.7 L1403.0,96.0 L1402.7,101.6 L1401.6,107.0 L1405.7,107.6 L1409.9,106.6 L1414.3,107.2 L1418.1,106.3 L1422.0,106.4 L1424.6,111.4 L1427.3,116.6 L1429.0,120.3 L1430.0,124.7 L1434.3,124.8 L1438.8,124.4 L1443.5,124.7 L1446.2,130.0 L1442.6,130.6 L1438.1,129.9 L1433.5,129.7 L1429.4,130.1 L1426.0,129.3 L1422.5,129.7 L1417.8,130.0 L1412.0,127.0" stroke-width="3.6"/><path d="M1328.4,161.0 L1331.3,157.9 L1333.8,153.2 L1335.3,150.7 L1336.9,145.7 L1340.1,142.8 L1343.0,139.6 L1344.7,135.5 L1349.2,135.4 L1353.6,133.7 L1358.0,132.8 L1365.0,129.4 L1369.9,128.1 L1374.0,127.4 L1378.6,126.9 L1383.7,125.1 L1388.0,124.0 L1391.8,125.0 L1396.6,126.4 L1401.3,128.1 L1405.6,128.7 L1412.4,126.7 L1415.5,129.9 L1417.1,133.3 L1420.3,136.1 L1421.9,139.6 L1425.3,142.5 L1428.1,144.0 L1432.8,147.2 L1435.4,149.0 L1439.1,151.1 L1443.5,154.8 L1447.1,158.0 L1450.3,160.0" stroke-width="3.6"/><path d="M1400.2,138.2 L1401.7,143.0 L1401.5,147.8 L1402.9,153.1 L1399.3,155.7 L1395.1,157.9 L1392.0,161.0" stroke-width="3.6"/><ellipse cx="1292" cy="42" rx="14" ry="3.5" transform="rotate(-30 1292 42)" stroke-width="3"/><path d="M1233,88 L1246,86 L1244,98 L1237,106 Z" fill="#000" stroke-width="3"/><path d="M1383,137 L1389,136 L1390,141 L1386,144 L1383,142 Z M1377,149 L1380,148 L1380.5,152 L1377.5,151.5 Z" fill="#000" stroke-width="2"/><path d="M695.0,671.5 L699.5,671.7 L703.3,672.3 L708.0,670.8 L711.9,672.0 L715.9,671.8 L719.7,671.2 L725.3,671.6 L729.3,671.0 L733.2,671.6 L737.5,671.5 L737.1,667.7 L737.6,664.3 L737.6,659.4 L737.5,655.5 L741.0,655.0 L746.1,654.9 L749.1,655.0 L753.9,656.0 L758.1,656.0 L761.3,654.7 L766.5,655.2 L770.5,655.3 L773.7,655.1 L777.7,656.1 L782.5,655.3 L786.5,655.5 L789.0,658.4 L791.0,662.4 L794.5,665.6 L797.0,668.0 L800.2,671.2 L803.1,673.3 L807.4,677.6 L810.0,680.0 L813.7,683.3 L818.5,685.0 L822.0,688.0 L825.5,692.1 L828.7,695.4 L832.0,698.0 L833.6,702.5 L836.3,706.9 L838.0,712.0 L839.2,717.1 L841.0,721.5 L842.1,725.0 L844.0,730.0" stroke-width="3.6"/><path d="M1687.0,169.0 L1690.9,168.5 L1695.9,168.6 L1699.3,168.3 L1703.4,168.7 L1707.2,168.2 L1710.9,169.4 L1715.3,168.4 L1719.1,168.5 L1723.3,168.0 L1728.1,168.5 L1731.3,169.1 L1735.3,168.3 L1740.6,168.1 L1744.0,169.2 L1748.7,168.1 L1752.0,169.0 L1756.2,169.3 L1760.0,169.3 L1764.5,168.1 L1768.5,167.9 L1773.0,168.1 L1777.4,168.6 L1780.6,168.0 L1785.1,168.0 L1789.0,168.4 L1791.9,162.6 L1793.7,158.0 L1798.2,157.0 L1802.3,156.3 L1807.0,155.0 L1811.7,153.7 L1813.6,149.8 L1815.2,145.8 L1816.6,143.4 L1818.7,139.5 L1820.8,135.6 L1821.9,131.2 L1824.0,126.6 L1825.6,121.3 L1827.6,117.5 L1828.9,112.5 L1830.2,108.8 L1832.1,103.8 L1834.0,99.4 L1837.3,96.1 L1839.9,92.4 L1841.4,87.7 L1843.9,84.6 L1847.6,80.3 L1850.0,76.8 L1857.0,75.7 L1861.4,76.3 L1866.3,76.0 L1870.5,76.8" stroke-width="3.6"/><path d="M1895.4,137.9 L1900.0,140.4 L1902.2,142.8 L1903.1,149.2 L1908.9,151.5 L1911.0,153.7 L1910.7,156.2 L1913.0,161.4 L1915.4,166.7 L1918.0,171.7 L1916.5,179.0 L1910.6,179.6 L1909.3,180.4 L1906.3,183.5 L1901.9,183.5 L1897.0,186.0 L1892.7,188.9 L1888.3,187.9 L1886.5,193.4 L1880.1,192.2 L1877.0,196.3 L1874.9,199.0 L1867.7,199.7 L1864.3,204.3 L1861.1,207.1 L1859.8,205.7 L1855.0,209.8 L1852.3,211.1 L1848.9,214.9 L1843.3,213.4 L1842.6,216.7 L1839.0,219.7 L1833.5,220.7" stroke-width="5"/><path d="M1833.5,220.7 L1830.7,224.9 L1827.1,227.3 L1822.3,231.3 L1820.0,234.2 L1817.7,238.2 L1816.8,241.2 L1814.3,245.0 L1811.6,250.0 L1809.8,257.2 L1814.4,262.7 L1812.2,266.6 L1809.0,269.0 L1805.7,272.3 L1803.5,275.3 L1808.2,277.5 L1810.7,279.0 L1812.7,282.0 L1814.4,286.2 L1815.1,289.5 L1818.0,293.4 L1821.6,298.0 L1825.9,297.3 L1830.6,298.0 L1835.2,292.0 L1832.0,286.5 L1826.0,285.3" stroke-width="4"/><path d="M1835.5,297.0 L1834.5,300.9 L1834.2,306.0" stroke-width="4"/><path d="M1821.6,299.0 L1818.0,300.6 L1812.5,300.6 L1808.1,303.7 L1802.6,306.0 L1796.6,305.3 L1792.0,306.0 L1788.0,308.3 L1785.1,310.5 L1780.0,313.3 L1773.7,315.5 L1768.4,315.6 L1763.1,316.3 L1759.3,317.5 L1755.5,317.9 L1750.2,318.2 L1746.7,318.3 L1744.2,323.0 L1741.2,328.0 L1737.8,330.9 L1732.1,331.5 L1728.7,333.2 L1725.0,336.0 L1719.9,338.8 L1717.0,342.7 L1716.2,347.8 L1716.9,350.8 L1716.5,356.2 L1716.6,360.0 L1715.9,364.1 L1717.0,369.9 L1715.5,374.6 L1710.4,378.6 L1710.0,382.2 L1706.0,386.1 L1702.3,389.3 L1700.4,391.8 L1698.0,394.6 L1696.2,399.5 L1692.4,402.4 L1687.0,400.0" stroke-width="3.8"/><g fill="#000" stroke-width="1"><ellipse cx="1813" cy="312.5" rx="8.5" ry="4.5"/><ellipse cx="1829" cy="315" rx="6" ry="3.5"/><circle cx="1787.7" cy="318.5" r="2.6"/><path d="M1789,296 L1797,297 L1799,308 L1790,310 Z"/></g><path d="M1722.0,339.0 L1726.8,338.5 L1731.4,336.2 L1735.4,334.8 L1739.6,334.6 L1745.0,333.0 L1749.8,331.5 L1753.0,330.9 L1758.3,330.2 L1761.5,328.8 L1766.8,327.6 L1770.2,325.5 L1775.3,324.6 L1779.0,323.7 L1775.0,325.0 L1771.2,326.8 L1767.2,326.7 L1763.9,328.9 L1760.0,330.0 L1756.6,331.7 L1752.9,333.4 L1748.3,334.0 L1743.9,335.0 L1740.7,336.0 L1737.0,337.5 L1732.7,340.1 L1728.2,339.9 L1725.0,342.0" stroke-width="3.2"/><path d="M1687.0,412.0 L1688.4,415.5 L1690.0,420.0 L1689.7,423.2 L1689.2,428.6 L1688.0,432.0" stroke-width="4"/></g>
<g fill="#fff" stroke="#6a6a6a" stroke-width="1.4"><circle cx="934.8" cy="34.5" r="3.4"/><circle cx="949.4" cy="95" r="3.4"/><circle cx="1064" cy="91.9" r="3.4"/><circle cx="728" cy="137" r="3.4"/><circle cx="1280" cy="27" r="3.4"/><circle cx="1507.5" cy="24" r="3.4"/><circle cx="1561" cy="116" r="3.4"/><circle cx="1410" cy="107" r="3.4"/><circle cx="1669" cy="152" r="3.4"/><circle cx="1798" cy="94.5" r="3.4"/><circle cx="1741" cy="190.5" r="3.4"/><circle cx="1839" cy="197" r="3.4"/><circle cx="1802" cy="274" r="3.4"/><circle cx="1718" cy="338" r="3.4"/><circle cx="790" cy="255.2" r="3.4"/><circle cx="833.4" cy="321.4" r="3.4"/><circle cx="829" cy="374" r="3.4"/><circle cx="833.4" cy="407.9" r="3.4"/><circle cx="801" cy="522" r="3.4"/><circle cx="785" cy="656" r="3.4"/><circle cx="797" cy="761" r="3.4"/><circle cx="760" cy="884" r="3.4"/></g>
<g font-family="Liberation Sans" font-size="14" fill="#fff" stroke="#fff" stroke-width="3" stroke-linejoin="round" opacity="0.9"><text x="917.7" y="28.3">Minot</text><text x="921.4" y="88.9">Bismarck</text><text x="1047.2" y="85.7">Fargo</text><text x="706" y="132">Billings</text><text x="1108" y="13">International Falls</text><text x="1243" y="21">Thunder Bay</text><text x="1481" y="18">Timmins</text><text x="1376" y="102">Sault Ste. Marie</text><text x="1532" y="110">North Bay</text><text x="1646" y="145">Ottawa</text><text x="1776" y="89">Quebec</text><text x="1709" y="185">Burlington</text><text x="1815" y="192">Augusta</text><text x="1781" y="269">Boston</text><text x="1687" y="331">New York</text><text x="1128" y="165">Minneapolis</text><text x="769" y="250">Casper</text><text x="803" y="316">Cheyenne</text><text x="805" y="368">Denver</text><text x="782" y="402">Colorado Springs</text><text x="775" y="516">Santa Fe</text><text x="764" y="651">El Paso</text><text x="752" y="755">Chihuahua City</text><text x="734" y="878">Culiacán</text></g>
<g font-family="Liberation Sans" font-size="14" fill="#454545" stroke="#454545" stroke-width="0.45"><text x="917.7" y="28.3">Minot</text><text x="921.4" y="88.9">Bismarck</text><text x="1047.2" y="85.7">Fargo</text><text x="706" y="132">Billings</text><text x="1108" y="13">International Falls</text><text x="1243" y="21">Thunder Bay</text><text x="1481" y="18">Timmins</text><text x="1376" y="102">Sault Ste. Marie</text><text x="1532" y="110">North Bay</text><text x="1646" y="145">Ottawa</text><text x="1776" y="89">Quebec</text><text x="1709" y="185">Burlington</text><text x="1815" y="192">Augusta</text><text x="1781" y="269">Boston</text><text x="1687" y="331">New York</text><text x="1128" y="165">Minneapolis</text><text x="769" y="250">Casper</text><text x="803" y="316">Cheyenne</text><text x="805" y="368">Denver</text><text x="782" y="402">Colorado Springs</text><text x="775" y="516">Santa Fe</text><text x="764" y="651">El Paso</text><text x="752" y="755">Chihuahua City</text><text x="734" y="878">Culiacán</text></g>
<g font-family="Liberation Sans" font-size="11" fill="#8a8a8a" letter-spacing="1.2" stroke="#fff" stroke-width="1.5" paint-order="stroke"><text x="1127" y="130">MINNESOTA</text><text x="761" y="566">NEW MEXICO</text><text x="1712" y="305">CONNECTICUT</text><text x="1687" y="362">W JERSEY</text><text x="1728" y="223">NEW</text><text x="1702" y="236">HAMPSHIRE</text><text x="1839" y="161">MAINE</text><text x="1909" y="117">BR</text></g>
</svg>

</div>
<div class="abs" style="left:1675px;top:24px;width:59px;height:53px;background:#fff;border-radius:9px"></div>
<svg class="abs" style="left:1675px;top:24px" width="59" height="53" viewBox="0 0 59 53">
  <defs><linearGradient id="aig" x1="0" y1="0" x2="0" y2="1"><stop offset="0" stop-color="#5b1ea6"/><stop offset="1" stop-color="#d34fd9"/></linearGradient></defs>
  <path d="M20.6,13 L30.8,13 A12.2,12.2 0 0 0 43,25.2 L43,35.2 Q43,39.7 38.5,39.7 L20.6,39.7 Q16.1,39.7 16.1,35.2 L16.1,17.5 Q16.1,13 20.6,13 Z" fill="url(#aig)"/>
  <path d="M37.8,12.6 Q38.7,17.1 43,18 Q38.7,18.9 37.8,23.4 Q36.9,18.9 32.6,18 Q36.9,17.1 37.8,12.6 Z" fill="#5a1ea6"/>
  <path d="M22.1,33.6 L26.6,19.8 L31.1,33.6 M23.7,29.1 L29.5,29.1" fill="none" stroke="#fff" stroke-width="2.1" stroke-linejoin="round"/>
  <rect x="35.1" y="27.8" width="2" height="5.8" fill="#fff"/>
</svg>
<div class="abs" style="left:1740px;top:24px;width:123px;height:54px;background:#1a4a8e;border-radius:10px"></div>
<svg class="abs" style="left:1755.3px;top:42px" width="22" height="18" viewBox="0 0 22 18"><rect x="1.1" y="4" width="19.8" height="12.8" rx="1" fill="none" stroke="#fff" stroke-width="1.3"/><path d="M7,4 L7,1 L15,1 L15,4" fill="none" stroke="#fff" stroke-width="1.3"/><path d="M0.7,9 L21,9" stroke="#fff" stroke-width="1.2"/><path d="M5.5,7.5 L5.5,10.5 M16.5,7.5 L16.5,10.5" stroke="#fff" stroke-width="1.3"/></svg>
<div class="abs" style="left:1790px;top:42px;font-size:17px;color:#fff">Toolbox</div>
<div class="abs" style="left:1871px;top:20px;width:38px;height:116px;background:#fff;border-radius:4px"></div>
<div class="abs" style="left:1871px;top:58.5px;width:38px;height:1px;background:#ddd"></div>
<div class="abs" style="left:1871px;top:97.5px;width:38px;height:1px;background:#ddd"></div>
<svg class="abs" style="left:1871px;top:20px" width="38" height="116" viewBox="0 0 38 116"><path d="M19,12 L19,27 M11.5,19.5 L26.5,19.5" stroke="#333" stroke-width="2.2"/><path d="M11.5,58.5 L26.5,58.5" stroke="#333" stroke-width="2.2"/><path d="M19,87 L24,100 L14,100 Z" fill="#4a5262"/><path d="M19,112 L24,100 L14,100 Z" fill="#a3abbb"/><circle cx="19" cy="100" r="2" fill="#fff"/></svg>
<div class="abs" style="left:1871px;top:148px;width:38px;height:38.5px;background:#fff;border-radius:4px"></div>
<svg class="abs" style="left:1871px;top:148px" width="38" height="39" viewBox="0 0 38 39"><path d="M10.5,19.5 L27.5,12 L20,29 L18.5,21 Z" fill="none" stroke="#333" stroke-width="1.6" stroke-linejoin="round"/></svg>
<div class="abs" style="left:1687px;top:868px;width:233px;height:17px;background:rgba(255,255,255,.5)"></div>
<div class="abs" style="left:1600px;top:869px;width:316px;text-align:right;font-size:14px;color:#333;white-space:nowrap">© MapTiler © OpenStreetMap contributors</div>
<div class="abs" style="left:1805px;top:836px;font-size:16.8px;color:#1c4a8f">Attribution</div>
<svg class="abs" style="left:1886px;top:835px" width="22" height="22" viewBox="0 0 22 22"><circle cx="11" cy="11" r="10" fill="#000"/><circle cx="12.5" cy="6.2" r="1.6" fill="#fff"/><path d="M9,9.5 L12.8,9.5 L11,16 L13,16" fill="none" stroke="#fff" stroke-width="2.3" stroke-linejoin="round"/></svg>
<div id="dlg">
  <div class="abs" style="left:0;top:0;width:842px;height:12px;background:linear-gradient(#fff,#f6f7f9)"></div>
  <div class="abs" style="left:0;top:11px;width:842px;height:99px;background:#f2f3f7;box-shadow:0 3px 6px rgba(0,0,0,.22);z-index:3"></div>
  <div class="abs" style="left:18px;top:21px;font-size:18.2px;color:#151515;z-index:4">View Filtered Layer Data as:</div>
  <svg class="abs" style="left:15px;top:57.3px;z-index:4" width="220" height="30" viewBox="0 0 220 30"><circle cx="13.3" cy="14.4" r="10.3" fill="none" stroke="#666" stroke-width="1.9"/><circle cx="115.6" cy="14.4" r="10.3" fill="none" stroke="#1a4b91" stroke-width="2"/><circle cx="115.6" cy="14.4" r="5.8" fill="#1a4b91"/></svg>
  <div class="abs" style="left:47px;top:68px;font-size:14.6px;letter-spacing:-0.2px;color:#151515;z-index:4">POINT</div>
  <div class="abs" style="left:100px;top:61px;font-size:14px;font-weight:bold;color:#1c4a8f;z-index:4">1</div>
  <div class="abs" style="left:149px;top:67px;font-size:15.5px;font-weight:bold;color:#1c4a8f;z-index:4">LINE</div>
  <div class="abs" style="left:190px;top:61px;font-size:14.5px;font-weight:bold;color:#1c4a8f;z-index:4">16548</div>
  <svg class="abs" style="left:750px;top:8px;z-index:4" width="92" height="36" viewBox="0 0 92 36"><path d="M5.8,13.9 L21,13.9" stroke="#111" stroke-width="2.4"/><rect x="44.5" y="5.5" width="15" height="15.5" fill="none" stroke="#111" stroke-width="1.1" rx="1"/><rect x="42" y="8" width="15" height="15" fill="#f2f3f7" stroke="#111" stroke-width="1.3" rx="1"/><path d="M69.5,5.8 L86,22.2 M86,5.8 L69.5,22.2" stroke="#111" stroke-width="2.5"/></svg>

  <div class="abs" style="left:0;top:110px;width:842px;height:661px;background:#fff;border-left:1px solid #ddd"></div>
  <div class="abs" style="left:1px;top:110px;width:819px;height:113px;background:#fafafa"></div>
  <div class="abs" style="left:1px;top:166.5px;width:819px;height:1px;background:#dedede"></div>
  <div class="abs" style="left:1px;top:222.5px;width:841px;height:1px;background:#dedede"></div>
  <div class="hd" style="left:19px">route</div>
  <div class="hd" style="left:195px">highway</div>
  <div class="hd" style="left:370px">z_order</div>
  <div class="hd" style="left:546px">name</div>
  <div class="hd" style="left:720px;letter-spacing:-0.5px">sl</div>
  <div class="sep" style="left:173.5px"></div>
  <div class="sep" style="left:348.5px"></div>
  <div class="sep" style="left:524.5px"></div>
  <div class="sep" style="left:699.5px"></div>
  <div class="inp" style="left:19px"></div>
  <div class="inp" style="left:195px"></div>
  <div class="inp" style="left:370px"></div>
  <div class="inp" style="left:546px"></div>
  <div class="inp" style="left:721px;width:20px"></div>
  <svg class="flt" style="left:140px" width="18" height="14" viewBox="0 0 18 14"><path d="M0.5,1.5 L16.5,1.5 M3.5,6.5 L13.5,6.5 M6.2,11.3 L10.8,11.3" stroke="#333" stroke-width="1.8"/></svg>
  <svg class="flt" style="left:315px" width="18" height="14" viewBox="0 0 18 14"><path d="M0.5,1.5 L16.5,1.5 M3.5,6.5 L13.5,6.5 M6.2,11.3 L10.8,11.3" stroke="#333" stroke-width="1.8"/></svg>
  <svg class="flt" style="left:491px" width="18" height="14" viewBox="0 0 18 14"><path d="M0.5,1.5 L16.5,1.5 M3.5,6.5 L13.5,6.5 M6.2,11.3 L10.8,11.3" stroke="#333" stroke-width="1.8"/></svg>
  <svg class="flt" style="left:666px" width="18" height="14" viewBox="0 0 18 14"><path d="M0.5,1.5 L16.5,1.5 M3.5,6.5 L13.5,6.5 M6.2,11.3 L10.8,11.3" stroke="#333" stroke-width="1.8"/></svg>
  <div class="abs" style="left:731px;top:110px;width:111px;height:113px;background:#fafafa"></div>
  <div class="abs" style="left:731px;top:166.5px;width:89px;height:1px;background:#dedede"></div>
  <div class="abs" style="left:731px;top:222.5px;width:111px;height:1px;background:#dedede"></div>
  <div class="hd" style="left:751px">Action</div>
  <div class="abs" style="left:733.5px;top:130px;width:2px;height:17px;background:#d4d4d4"></div>
  <div id="rows" class="abs" style="left:1px;top:0;width:819px;height:637px;overflow:hidden">
<div class="row" style="top:224px"><span class="c1">hiking</span><span class="c3">0</span><span class="c4">California Missio...</span><span class="c5">u</span></div>
<svg class="zi" style="top:232px" width="34" height="30" viewBox="0 0 34 30"><circle cx="11" cy="10" r="8.7" fill="#fff" stroke="#000" stroke-width="1.9"/><path d="M11,5.5 L11,14.5 M6.5,10 L15.5,10" stroke="#000" stroke-width="1.9"/><path d="M17.2,15.8 L26.5,23.2 Q28,24.4 29.2,23.1 Q30.1,21.8 28.7,20.7 L19.4,13.4" fill="#fff" stroke="#000" stroke-width="1.7" stroke-linejoin="round"/></svg>
<div class="row" style="top:273px"><span class="c1">hiking</span><span class="c3">0</span><span class="c4">California Missio...</span><span class="c5">u</span></div>
<svg class="zi" style="top:281px" width="34" height="30" viewBox="0 0 34 30"><circle cx="11" cy="10" r="8.7" fill="#fff" stroke="#000" stroke-width="1.9"/><path d="M11,5.5 L11,14.5 M6.5,10 L15.5,10" stroke="#000" stroke-width="1.9"/><path d="M17.2,15.8 L26.5,23.2 Q28,24.4 29.2,23.1 Q30.1,21.8 28.7,20.7 L19.4,13.4" fill="#fff" stroke="#000" stroke-width="1.7" stroke-linejoin="round"/></svg>
<div class="row" style="top:322px"><span class="c1">hiking</span><span class="c3">0</span><span class="c4">California Coastal...</span><span class="c5">u</span></div>
<svg class="zi" style="top:330px" width="34" height="30" viewBox="0 0 34 30"><circle cx="11" cy="10" r="8.7" fill="#fff" stroke="#000" stroke-width="1.9"/><path d="M11,5.5 L11,14.5 M6.5,10 L15.5,10" stroke="#000" stroke-width="1.9"/><path d="M17.2,15.8 L26.5,23.2 Q28,24.4 29.2,23.1 Q30.1,21.8 28.7,20.7 L19.4,13.4" fill="#fff" stroke="#000" stroke-width="1.7" stroke-linejoin="round"/></svg>
<div class="row" style="top:371px"><span class="c1">hiking</span><span class="c3">0</span><span class="c4">Big Rock Trail</span><span class="c5">u</span></div>
<svg class="zi" style="top:379px" width="34" height="30" viewBox="0 0 34 30"><circle cx="11" cy="10" r="8.7" fill="#fff" stroke="#000" stroke-width="1.9"/><path d="M11,5.5 L11,14.5 M6.5,10 L15.5,10" stroke="#000" stroke-width="1.9"/><path d="M17.2,15.8 L26.5,23.2 Q28,24.4 29.2,23.1 Q30.1,21.8 28.7,20.7 L19.4,13.4" fill="#fff" stroke="#000" stroke-width="1.7" stroke-linejoin="round"/></svg>
<div class="row" style="top:420px"><span class="c1">hiking</span><span class="c3">0</span><span class="c4">Sitka Trail</span><span class="c5">u</span></div>
<svg class="zi" style="top:428px" width="34" height="30" viewBox="0 0 34 30"><circle cx="11" cy="10" r="8.7" fill="#fff" stroke="#000" stroke-width="1.9"/><path d="M11,5.5 L11,14.5 M6.5,10 L15.5,10" stroke="#000" stroke-width="1.9"/><path d="M17.2,15.8 L26.5,23.2 Q28,24.4 29.2,23.1 Q30.1,21.8 28.7,20.7 L19.4,13.4" fill="#fff" stroke="#000" stroke-width="1.7" stroke-linejoin="round"/></svg>
<div class="row" style="top:469px"><span class="c1">hiking</span><span class="c3">0</span><span class="c4">Big Rock Trail</span><span class="c5">u</span></div>
<svg class="zi" style="top:477px" width="34" height="30" viewBox="0 0 34 30"><circle cx="11" cy="10" r="8.7" fill="#fff" stroke="#000" stroke-width="1.9"/><path d="M11,5.5 L11,14.5 M6.5,10 L15.5,10" stroke="#000" stroke-width="1.9"/><path d="M17.2,15.8 L26.5,23.2 Q28,24.4 29.2,23.1 Q30.1,21.8 28.7,20.7 L19.4,13.4" fill="#fff" stroke="#000" stroke-width="1.7" stroke-linejoin="round"/></svg>
<div class="row" style="top:518px"><span class="c1">hiking</span><span class="c3">0</span><span class="c4">PCT - California S...</span><span class="c5">u</span></div>
<svg class="zi" style="top:526px" width="34" height="30" viewBox="0 0 34 30"><circle cx="11" cy="10" r="8.7" fill="#fff" stroke="#000" stroke-width="1.9"/><path d="M11,5.5 L11,14.5 M6.5,10 L15.5,10" stroke="#000" stroke-width="1.9"/><path d="M17.2,15.8 L26.5,23.2 Q28,24.4 29.2,23.1 Q30.1,21.8 28.7,20.7 L19.4,13.4" fill="#fff" stroke="#000" stroke-width="1.7" stroke-linejoin="round"/></svg>
<div class="row" style="top:567px"><span class="c1">hiking</span><span class="c3">0</span><span class="c4">Nature Trail Loop</span><span class="c5">u</span></div>
<svg class="zi" style="top:575px" width="34" height="30" viewBox="0 0 34 30"><circle cx="11" cy="10" r="8.7" fill="#fff" stroke="#000" stroke-width="1.9"/><path d="M11,5.5 L11,14.5 M6.5,10 L15.5,10" stroke="#000" stroke-width="1.9"/><path d="M17.2,15.8 L26.5,23.2 Q28,24.4 29.2,23.1 Q30.1,21.8 28.7,20.7 L19.4,13.4" fill="#fff" stroke="#000" stroke-width="1.7" stroke-linejoin="round"/></svg>
<div class="row" style="top:616px"><span class="c1">hiking</span><span class="c3">0</span><span class="c4">Nature Trail Loop</span><span class="c5">u</span></div>
<svg class="zi" style="top:624px" width="34" height="30" viewBox="0 0 34 30"><circle cx="11" cy="10" r="8.7" fill="#fff" stroke="#000" stroke-width="1.9"/><path d="M11,5.5 L11,14.5 M6.5,10 L15.5,10" stroke="#000" stroke-width="1.9"/><path d="M17.2,15.8 L26.5,23.2 Q28,24.4 29.2,23.1 Q30.1,21.8 28.7,20.7 L19.4,13.4" fill="#fff" stroke="#000" stroke-width="1.7" stroke-linejoin="round"/></svg>

  </div>
  <div class="abs" style="left:730.5px;top:110px;width:1px;height:527px;background:#dedede;z-index:2"></div>
  <div class="abs" style="left:820px;top:223px;width:22px;height:414px;background:#fafafa"></div>
  <svg class="abs" style="left:820px;top:223px" width="22" height="414" viewBox="0 0 22 414"><path d="M4.5,18 L17,18 L10.8,8.5 Z" fill="#888" stroke="#888" stroke-width="1.2" stroke-linejoin="round"/><rect x="4.5" y="27" width="11.5" height="24" rx="5.7" fill="#888"/><path d="M4.5,397.5 L17,397.5 L10.8,407 Z" fill="#888" stroke="#888" stroke-width="1.2" stroke-linejoin="round"/></svg>
  <div class="abs" style="left:1px;top:636px;width:841px;height:24px;background:#fafafa"></div>
  <svg class="abs" style="left:0;top:636px" width="842" height="24" viewBox="0 0 842 24"><path d="M8,13 L18,6 L18,20 Z" fill="#888" stroke="#888" stroke-width="1.3" stroke-linejoin="round"/><rect x="26.8" y="6.5" width="403" height="12" rx="6" fill="#888"/><path d="M724,13 L714,6 L714,20 Z" fill="#888" stroke="#888" stroke-width="1.3" stroke-linejoin="round"/><path d="M739,13 L749,6 L749,20 Z" fill="#888" stroke="#888" stroke-width="1.3" stroke-linejoin="round"/><path d="M834,13 L824,6 L824,20 Z" fill="#888" stroke="#888" stroke-width="1.3" stroke-linejoin="round"/><rect x="730.5" y="0" width="1" height="24" fill="#dedede"/></svg>
  <div class="abs" style="left:0;top:660px;width:842px;height:64px;background:#1a5ca9;border-radius:10px 8px 0 0"></div>
  <div class="abs" style="left:17px;top:695px;font-size:16px;color:#fff">Items per Page: 200</div>
  <div class="abs" style="left:520px;top:684px;width:142px;text-align:center;font-size:16px;line-height:20px;color:#fff">1 - 200 of<br>16548 entries</div>
  <div class="abs" style="left:676px;top:695px;font-size:14px;font-weight:bold;color:#8fb1d9;letter-spacing:.3px">PREV</div>
  <div class="abs" style="left:735px;top:694px;font-size:16.5px;color:#fff">1</div>
  <div class="abs" style="left:764px;top:695px;font-size:14px;font-weight:bold;color:#fff;letter-spacing:.3px">NEXT</div>
</div>
</body></html>
